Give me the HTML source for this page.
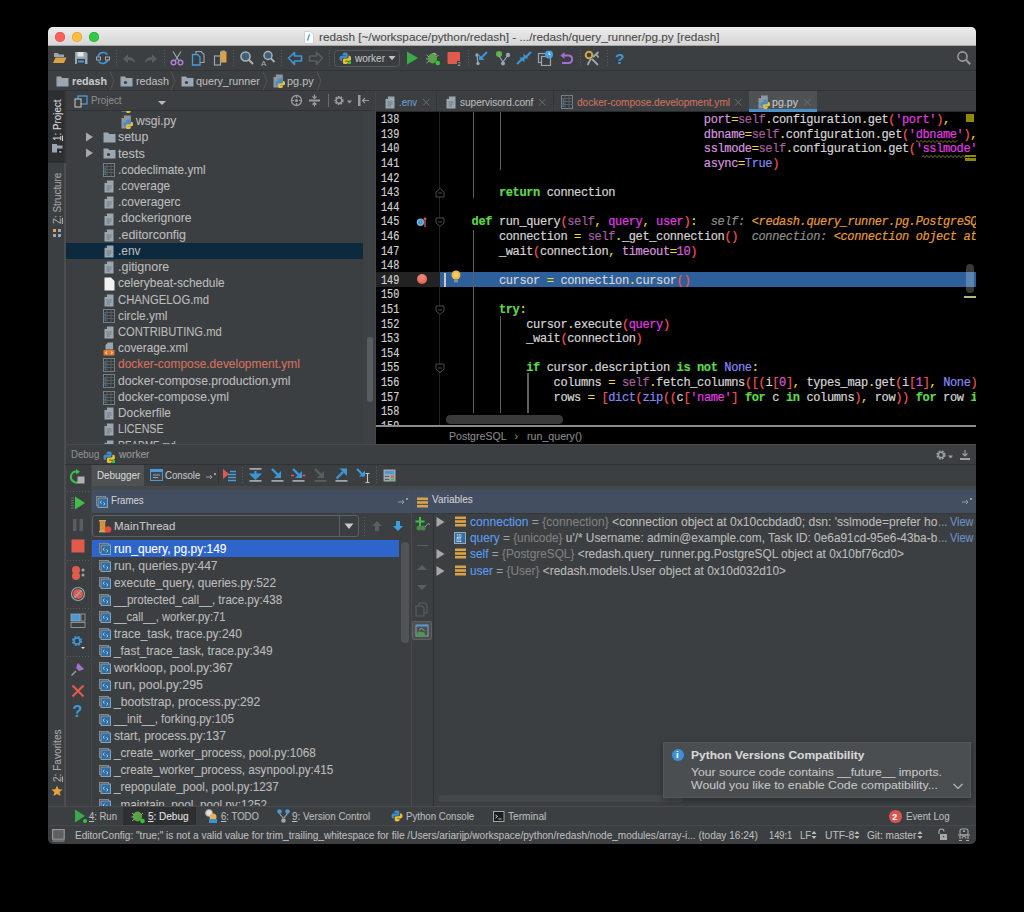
<!DOCTYPE html>
<html><head><meta charset="utf-8"><title>redash</title>
<style>
*{box-sizing:border-box}
html,body{margin:0;padding:0}
body{width:1024px;height:912px;background:#000;position:relative;overflow:hidden;font-family:"Liberation Sans",sans-serif}
.a{position:absolute;display:block}
.t{position:absolute;white-space:pre;line-height:0;transform-origin:0 0}
.t{-webkit-text-stroke:0.1px currentColor}
.t.m{-webkit-text-stroke:0.2px currentColor}
#win{position:absolute;left:48px;top:27px;width:928px;height:817px;border-radius:5px;overflow:hidden;background:#3c3f41}
#in{position:absolute;left:-48px;top:-27px;width:1024px;height:912px}
</style></head><body><div id="win"><div id="in">
<div class="a" style="left:48px;top:27px;width:928px;height:18.7px;background:linear-gradient(#ececec,#d5d5d5);"></div>
<div class="a" style="left:48px;top:45.2px;width:928px;height:0.8px;background:#a8a8a8;"></div>
<div class="a" style="left:54.7px;top:31.6px;width:10.4px;height:10.4px;border-radius:50%;background:#fc605b;box-shadow:inset 0 0 0 0.5px #de4a43"></div>
<div class="a" style="left:71.9px;top:31.6px;width:10.4px;height:10.4px;border-radius:50%;background:#fdbc40;box-shadow:inset 0 0 0 0.5px #dea034"></div>
<div class="a" style="left:89.0px;top:31.6px;width:10.4px;height:10.4px;border-radius:50%;background:#34c84a;box-shadow:inset 0 0 0 0.5px #27aa35"></div>
<svg class="a" style="left:303.5px;top:30.5px;" width="10" height="13" viewBox="0 0 10 13"><path d="M0.5 0.5h6l3 3v9h-9z" fill="#fdfdfd" stroke="#c8c8c8" stroke-width="0.8"/><path d="M5.8 3.5l-0.8 1 M5 4.5 L3.6 9.5" stroke="#3a9ee0" stroke-width="1.3" fill="none"/></svg>
<div class="t" style="left:319px;top:37.11px;font-size:11.8px;color:#4b4b4b;font-weight:normal;font-family:'Liberation Sans';font-style:normal;transform:scaleX(0.9971);">redash [~/workspace/python/redash] - .../redash/query_runner/pg.py [redash]</div>
<div class="a" style="left:48px;top:70px;width:928px;height:1px;background:#323435;"></div>
<svg class="a" style="left:51.7px;top:50.0px;" width="16" height="16" viewBox="0 0 16 16"><path d="M2 3h4l1 1.5h5v2.5H2z" fill="#9aa7b0"/><path d="M3.5 7.5h11l-2.5 5.5H1z" fill="#d9a343"/></svg>
<svg class="a" style="left:73.2px;top:50.0px;" width="16" height="16" viewBox="0 0 16 16"><path d="M2 2h11l1.5 1.5V14H2z" fill="#9aa7b0"/><rect x="4.5" y="2" width="6" height="4.5" fill="#e6e6e6"/><rect x="4" y="9" width="8" height="5" fill="#3c3f41"/><rect x="5" y="10.5" width="6" height="2" fill="#4a9ad8"/></svg>
<svg class="a" style="left:94.7px;top:50.0px;" width="16" height="16" viewBox="0 0 16 16"><path d="M3 6.5A5.5 5.5 0 0 1 12.5 4.5" stroke="#3d96d6" stroke-width="1.6" fill="none"/><path d="M13 9.5A5.5 5.5 0 0 1 3.5 11.5" stroke="#3d96d6" stroke-width="1.6" fill="none"/><rect x="1.5" y="7" width="4" height="3" fill="none" stroke="#9aa7b0"/><rect x="10.5" y="7" width="4" height="3" fill="none" stroke="#9aa7b0"/></svg>
<div class="a" style="left:115.9px;top:50px;width:1px;height:17px;background:repeating-linear-gradient(#5a5d5f 0 1px,transparent 1px 3px)"></div>
<svg class="a" style="left:121.0px;top:50.0px;" width="16" height="16" viewBox="0 0 16 16"><path d="M2 9l5-5v3c4 0 7 2 7 6-1.5-2-4-3-7-3v3z" fill="#5b5e60"/></svg>
<svg class="a" style="left:142.5px;top:50.0px;" width="16" height="16" viewBox="0 0 16 16"><path d="M14 9l-5-5v3c-4 0-7 2-7 6 1.5-2 4-3 7-3v3z" fill="#5b5e60"/></svg>
<div class="a" style="left:164.1px;top:50px;width:1px;height:17px;background:repeating-linear-gradient(#5a5d5f 0 1px,transparent 1px 3px)"></div>
<svg class="a" style="left:169.3px;top:50.0px;" width="16" height="16" viewBox="0 0 16 16"><path d="M4 1.5l6 9.5M12 1.5l-6 9.5" stroke="#9aa7b0" stroke-width="1.2"/><circle cx="4.5" cy="12.5" r="2.3" fill="none" stroke="#b27ed8" stroke-width="1.4"/><circle cx="11.5" cy="12.5" r="2.3" fill="none" stroke="#b27ed8" stroke-width="1.4"/></svg>
<svg class="a" style="left:190.4px;top:50.0px;" width="16" height="16" viewBox="0 0 16 16"><path d="M6 1.5h5l3 3v8H6z" fill="none" stroke="#9aa7b0" stroke-width="1.1"/><path d="M2.5 4.5h5l2.5 2.5v8H2.5z" fill="#3c3f41" stroke="#4a9ad8" stroke-width="1.3"/></svg>
<svg class="a" style="left:211.9px;top:50.0px;" width="16" height="16" viewBox="0 0 16 16"><rect x="8" y="1.5" width="6.5" height="11" fill="#d9a343"/><rect x="9.5" y="0.5" width="3.5" height="2" fill="#9aa7b0"/><rect x="2.5" y="6" width="6" height="9" fill="#3c3f41" stroke="#9aa7b0" stroke-width="1.2"/></svg>
<div class="a" style="left:232.7px;top:50px;width:1px;height:17px;background:repeating-linear-gradient(#5a5d5f 0 1px,transparent 1px 3px)"></div>
<svg class="a" style="left:239.2px;top:50.0px;" width="16" height="16" viewBox="0 0 16 16"><circle cx="6.5" cy="6.5" r="4.5" fill="#3d7bb0" fill-opacity="0.55" stroke="#aab0b5" stroke-width="1.6"/><path d="M9.8 9.8L14 14" stroke="#aab0b5" stroke-width="2"/></svg>
<svg class="a" style="left:260.0px;top:50.0px;" width="16" height="16" viewBox="0 0 16 16"><circle cx="8" cy="5.5" r="4" fill="#3d7bb0" fill-opacity="0.55" stroke="#aab0b5" stroke-width="1.5"/><path d="M11 8.5L14.5 12" stroke="#aab0b5" stroke-width="1.8"/><text x="1" y="15.5" font-size="8" font-family="Liberation Sans" fill="#aab0b5">A</text></svg>
<div class="a" style="left:281.3px;top:50px;width:1px;height:17px;background:repeating-linear-gradient(#5a5d5f 0 1px,transparent 1px 3px)"></div>
<svg class="a" style="left:286.5px;top:50.0px;" width="16" height="16" viewBox="0 0 16 16"><path d="M1.5 8l6-5.5v3.5h7v5h-7v3.5z" fill="none" stroke="#3d96d6" stroke-width="1.6" stroke-linejoin="round"/></svg>
<svg class="a" style="left:308.0px;top:50.0px;" width="16" height="16" viewBox="0 0 16 16"><path d="M14.5 8l-6-5.5v3.5h-7v5h7v3.5z" fill="none" stroke="#5b5e60" stroke-width="1.6" stroke-linejoin="round"/></svg>
<div class="a" style="left:329.1px;top:50px;width:1px;height:17px;background:repeating-linear-gradient(#5a5d5f 0 1px,transparent 1px 3px)"></div>
<div class="a" style="left:333.8px;top:50.3px;width:66px;height:16.4px;border:1px solid #55585a;border-radius:3.5px;background:#3a3d3f"></div>
<svg class="a" style="left:338.6px;top:51.9px;" width="12.6" height="12.6" viewBox="0 0 12.6 12.6"><g transform="scale(1.05)"><path d="M6 0.5c-2.6 0-2.5 1.2-2.5 1.2V3h2.6v0.6H2.2S0.5 3.4 0.5 6c0 2.6 1.5 2.5 1.5 2.5h0.9V7.3s0-1.5 1.5-1.5h2.5s1.4 0 1.4-1.4V1.9S8.5 0.5 6 0.5z" fill="#3d8ccf"/><path d="M6 11.5c2.6 0 2.5-1.2 2.5-1.2V9H5.9V8.4h3.9s1.7 0.2 1.7-2.4c0-2.6-1.5-2.5-1.5-2.5H9.1v1.2s0 1.5-1.5 1.5H5.1s-1.4 0-1.4 1.4v2.5S3.5 11.5 6 11.5z" fill="#e6c132"/><circle cx="10.3" cy="10.3" r="1.8" fill="#2ec834"/></g></svg>
<div class="t" style="left:354.6px;top:57.61px;font-size:11.5px;color:#c4c4c4;font-weight:normal;font-family:'Liberation Sans';font-style:normal;transform:scaleX(0.8694);">worker</div>
<svg class="a" style="left:384.1px;top:50.3px;" width="16" height="16" viewBox="0 0 16 16"><path d="M4.5 6h7l-3.5 4.3z" fill="#c4c4c4"/></svg>
<svg class="a" style="left:403.7px;top:50.0px;" width="16" height="16" viewBox="0 0 16 16"><path d="M3 1.5l11 6.5-11 6.5z" fill="#3daa4a"/></svg>
<svg class="a" style="left:424.8px;top:50.0px;" width="16" height="16" viewBox="0 0 16 16"><ellipse cx="7.5" cy="8.5" rx="4.5" ry="5" fill="#5aa342"/><path d="M7 3.5a3 3 0 0 1 5 2" fill="#9aa7b0"/><path d="M1.5 5l2.5 2M1 9h2.5M1.5 13l2.5-2M13.5 5l-2 2" stroke="#9aa7b0" stroke-width="1"/><circle cx="12.8" cy="13" r="2.3" fill="#2ec834"/></svg>
<svg class="a" style="left:446.4px;top:50.0px;" width="16" height="16" viewBox="0 0 16 16"><rect x="1.5" y="2" width="12.5" height="12" rx="1" fill="#e05a4e"/><rect x="11" y="11" width="5" height="5" fill="#3c3f41"/><text x="11.8" y="15.8" font-size="5" fill="#bbb" font-family="Liberation Sans">2</text></svg>
<div class="a" style="left:467.9px;top:50px;width:1px;height:17px;background:repeating-linear-gradient(#5a5d5f 0 1px,transparent 1px 3px)"></div>
<svg class="a" style="left:472.9px;top:50.0px;" width="16" height="16" viewBox="0 0 16 16"><path d="M14 2L7.5 8.5" stroke="#3d96d6" stroke-width="2"/><path d="M6 4.5v5.5h5.5z" fill="#3d96d6"/><circle cx="4" cy="5" r="1.7" fill="#9aa7b0"/><circle cx="5" cy="13.5" r="1.7" fill="#9aa7b0"/><path d="M4 5l1 8.5" stroke="#9aa7b0" stroke-width="1.2"/></svg>
<svg class="a" style="left:494.6px;top:50.0px;" width="16" height="16" viewBox="0 0 16 16"><circle cx="4" cy="4" r="3" fill="#62b543"/><circle cx="13" cy="5" r="2.2" fill="#9aa7b0"/><circle cx="8" cy="13.5" r="2" fill="#9aa7b0"/><path d="M4 6l4 6M12 6.5L8 12" stroke="#9aa7b0" stroke-width="1.2"/></svg>
<svg class="a" style="left:516.2px;top:50.0px;" width="16" height="16" viewBox="0 0 16 16"><path d="M15 2L9 8M1 14l6-6" stroke="#3d96d6" stroke-width="2"/><path d="M7.5 3.5v5h5z M8.5 12.5v-5h-5z" fill="#3d96d6"/></svg>
<svg class="a" style="left:537.3px;top:50.0px;" width="16" height="16" viewBox="0 0 16 16"><rect x="1.5" y="3.5" width="9" height="9" fill="none" stroke="#9aa7b0" stroke-width="1.2"/><rect x="4.5" y="6.5" width="9" height="9" fill="#3c3f41" stroke="#9aa7b0" stroke-width="1.2"/><circle cx="12" cy="4.5" r="4" fill="#4aa0e0"/><path d="M12 2.5v2h1.5" stroke="#fff" stroke-width="0.9" fill="none"/></svg>
<svg class="a" style="left:558.9px;top:50.0px;" width="16" height="16" viewBox="0 0 16 16"><path d="M4 5.5h6a3.8 3.8 0 0 1 0 7.5H3" fill="none" stroke="#a46ed6" stroke-width="1.9"/><path d="M1.5 5.5l4-3.5v7z" fill="#a46ed6"/></svg>
<div class="a" style="left:580.0px;top:50px;width:1px;height:17px;background:repeating-linear-gradient(#5a5d5f 0 1px,transparent 1px 3px)"></div>
<svg class="a" style="left:584.2px;top:50.0px;" width="16" height="16" viewBox="0 0 16 16"><circle cx="5" cy="5" r="3.3" fill="none" stroke="#d9a343" stroke-width="2"/><path d="M7 8.5L3.5 15 M9 7l5.5-5 M12 4l2.5 3.5 M8 9l6 6" stroke="#9aa7b0" stroke-width="1.8"/></svg>
<div class="a" style="left:606.9px;top:50px;width:1px;height:17px;background:repeating-linear-gradient(#5a5d5f 0 1px,transparent 1px 3px)"></div>
<div class="t" style="left:615.2px;top:58.80px;font-size:15px;color:#3d96d6;font-weight:bold;font-family:'Liberation Sans';font-style:normal;">?</div>
<svg class="a" style="left:956.4px;top:49.9px;" width="16" height="16" viewBox="0 0 16 16"><circle cx="6.5" cy="6.5" r="4.6" fill="none" stroke="#9a9a9a" stroke-width="1.6"/><path d="M9.8 9.8L14.2 14.2" stroke="#9a9a9a" stroke-width="2.1"/></svg>
<div class="a" style="left:48px;top:90px;width:928px;height:1px;background:#333132;"></div>
<svg class="a" style="left:56px;top:75px;" width="13" height="12" viewBox="0 0 13 12"><path d="M0.5 1.5h4.5l1.2 1.5h6.3v8.5H0.5z" fill="#9aa7b0"/></svg>
<div class="t" style="left:72px;top:81.31px;font-size:11.5px;color:#c8c8c8;font-weight:bold;font-family:'Liberation Sans';font-style:normal;transform:scaleX(0.9281);">redash</div>
<svg class="a" style="left:109px;top:71px;" width="7" height="20" viewBox="0 0 7 20"><path d="M1 0.5L5 10 1 19.5" fill="none" stroke="#55585a" stroke-width="0.9"/></svg>
<svg class="a" style="left:119.5px;top:75px;" width="13" height="12" viewBox="0 0 13 12"><path d="M0.5 1.5h4.5l1.2 1.5h6.3v8.5H0.5z" fill="#9aa7b0"/><circle cx="5.5" cy="7.5" r="1.6" fill="#3c3f41"/></svg>
<div class="t" style="left:135.5px;top:81.31px;font-size:11.5px;color:#bbbbbb;font-weight:normal;font-family:'Liberation Sans';font-style:normal;transform:scaleX(0.9385);">redash</div>
<svg class="a" style="left:170.2px;top:71px;" width="7" height="20" viewBox="0 0 7 20"><path d="M1 0.5L5 10 1 19.5" fill="none" stroke="#55585a" stroke-width="0.9"/></svg>
<svg class="a" style="left:181px;top:75px;" width="13" height="12" viewBox="0 0 13 12"><path d="M0.5 1.5h4.5l1.2 1.5h6.3v8.5H0.5z" fill="#9aa7b0"/><circle cx="5.5" cy="7.5" r="1.6" fill="#3c3f41"/></svg>
<div class="t" style="left:196.2px;top:81.31px;font-size:11.5px;color:#bbbbbb;font-weight:normal;font-family:'Liberation Sans';font-style:normal;transform:scaleX(0.9327);">query_runner</div>
<svg class="a" style="left:262.4px;top:71px;" width="7" height="20" viewBox="0 0 7 20"><path d="M1 0.5L5 10 1 19.5" fill="none" stroke="#55585a" stroke-width="0.9"/></svg>
<svg class="a" style="left:272.5px;top:73.5px;" width="11" height="14" viewBox="0 0 11 14"><path d="M3 0.5h6.8v13H0.5V3z" fill="#8f979c"/><path d="M0.5 3L3 0.5V3z" fill="#3c3f41"/></svg>
<svg class="a" style="left:275.1px;top:77.7px;" width="10.5" height="10.5" viewBox="0 0 10.5 10.5"><g transform="scale(0.875)"><path d="M6 0.5c-2.6 0-2.5 1.2-2.5 1.2V3h2.6v0.6H2.2S0.5 3.4 0.5 6c0 2.6 1.5 2.5 1.5 2.5h0.9V7.3s0-1.5 1.5-1.5h2.5s1.4 0 1.4-1.4V1.9S8.5 0.5 6 0.5z" fill="#3d8ccf"/><path d="M6 11.5c2.6 0 2.5-1.2 2.5-1.2V9H5.9V8.4h3.9s1.7 0.2 1.7-2.4c0-2.6-1.5-2.5-1.5-2.5H9.1v1.2s0 1.5-1.5 1.5H5.1s-1.4 0-1.4 1.4v2.5S3.5 11.5 6 11.5z" fill="#e6c132"/></g></svg>
<div class="t" style="left:287.3px;top:81.31px;font-size:11.5px;color:#bbbbbb;font-weight:normal;font-family:'Liberation Sans';font-style:normal;transform:scaleX(0.9491);">pg.py</div>
<svg class="a" style="left:315.7px;top:71px;" width="7" height="20" viewBox="0 0 7 20"><path d="M1 0.5L5 10 1 19.5" fill="none" stroke="#55585a" stroke-width="0.9"/></svg>
<div class="a" style="left:48px;top:91px;width:16.5px;height:72px;background:#2d2f31;"></div>
<div class="a" style="left:64.3px;top:163px;width:1.4px;height:643px;background:#4c4d4e;"></div>
<div class="a" style="left:64.3px;top:91px;width:1.4px;height:72px;background:#333436;"></div>
<div class="a" style="left:48px;top:140.5px;width:0;height:0;transform:rotate(-90deg);transform-origin:0 0">
<div class="t" style="left:0px;top:9.46px;font-size:10.8px;color:#d8d8d8;font-weight:normal;font-family:'Liberation Sans';font-style:normal;transform:scaleX(0.9099);"><u>1</u>: Project</div>
</div>
<svg class="a" style="left:50.5px;top:143px;" width="13" height="11" viewBox="0 0 13 11"><rect x="1" y="1" width="5" height="8.5" fill="#9aa7b0"/><rect x="6" y="2.5" width="5.5" height="3" fill="#9aa7b0"/><rect x="7" y="7" width="4.5" height="3.5" fill="#1e1f20"/><rect x="8" y="8.3" width="2.5" height="1.2" fill="#d0d0d0"/></svg>
<div class="a" style="left:48px;top:223.8px;width:0;height:0;transform:rotate(-90deg);transform-origin:0 0">
<div class="t" style="left:0px;top:9.46px;font-size:10.8px;color:#a8a8a8;font-weight:normal;font-family:'Liberation Sans';font-style:normal;transform:scaleX(0.9096);"><u>Z</u>: Structure</div>
</div>
<svg class="a" style="left:52px;top:227.5px;" width="11" height="10" viewBox="0 0 11 10"><rect x="1" y="1" width="3" height="3" fill="#e6a23c"/><rect x="6" y="1" width="3" height="3" fill="#9aa7b0"/><rect x="1" y="6" width="3" height="3" fill="#9aa7b0"/><rect x="6" y="6" width="3" height="3" fill="#9aa7b0"/></svg>
<div class="a" style="left:48px;top:782px;width:0;height:0;transform:rotate(-90deg);transform-origin:0 0">
<div class="t" style="left:0px;top:9.46px;font-size:10.8px;color:#a8a8a8;font-weight:normal;font-family:'Liberation Sans';font-style:normal;transform:scaleX(0.9308);"><u>2</u>: Favorites</div>
</div>
<svg class="a" style="left:51px;top:785px;" width="12" height="12" viewBox="0 0 12 12"><path d="M6 0.5l1.6 3.7 4 0.3-3 2.6 1 3.9L6 8.9 2.4 11l1-3.9-3-2.6 4-0.3z" fill="#e6a23c"/></svg>
<div class="a" style="left:65px;top:109.5px;width:310px;height:1px;background:#303234;"></div>
<svg class="a" style="left:73.5px;top:95px;" width="14" height="13" viewBox="0 0 14 13"><rect x="4" y="1" width="9" height="8" fill="none" stroke="#4a9ad8" stroke-width="1.3"/><rect x="1" y="4" width="6" height="8" fill="#3c3f41" stroke="#c0c0c0" stroke-width="1.1"/></svg>
<div class="t" style="left:91px;top:100.96px;font-size:10.2px;color:#8c8c8c;font-weight:normal;font-family:'Liberation Sans';font-style:normal;transform:scaleX(0.9619);">Project</div>
<svg class="a" style="left:154.7px;top:94.5px;" width="14" height="14" viewBox="0 0 14 14"><path d="M3 6h8l-4 4z" fill="#bbbbbb"/></svg>
<svg class="a" style="left:289.6px;top:94.2px;" width="13" height="13" viewBox="0 0 13 13"><circle cx="6.5" cy="6.5" r="5" fill="none" stroke="#9a9a9a" stroke-width="1.3"/><circle cx="6.5" cy="6.5" r="1.6" fill="#9a9a9a"/><path d="M6.5 1.5v2.5M6.5 9v2.5M1.5 6.5H4M9 6.5h2.5" stroke="#9a9a9a" stroke-width="1.2"/></svg>
<svg class="a" style="left:308.2px;top:94.2px;" width="13" height="13" viewBox="0 0 13 13"><path d="M6.5 0.5v4M4.5 2.5l2 2 2-2M6.5 12.5v-4M4.5 10.5l2-2 2 2" stroke="#9a9a9a" stroke-width="1.2" fill="none"/><rect x="1" y="5.5" width="11" height="2" fill="#9a9a9a"/></svg>
<div class="a" style="left:327.5px;top:94px;width:1.2px;height:13px;background:#6a6a6a;"></div>
<svg class="a" style="left:333.1px;top:94.2px;" width="13" height="13" viewBox="0 0 13 13"><circle cx="6" cy="6.5" r="3.5" fill="none" stroke="#9a9a9a" stroke-width="2.2" stroke-dasharray="1.6 0.9"/><circle cx="6" cy="6.5" r="2.8" fill="none" stroke="#9a9a9a" stroke-width="1.4"/></svg>
<svg class="a" style="left:346.0px;top:98.0px;" width="7" height="7" viewBox="0 0 7 7"><path d="M1 2.5h5l-2.5 3z" fill="#9a9a9a"/></svg>
<svg class="a" style="left:357.0px;top:94.2px;" width="13" height="13" viewBox="0 0 13 13"><rect x="1" y="1" width="2.5" height="11" fill="#9a9a9a"/><path d="M12 6.5H6M8 4l-2.5 2.5L8 9" stroke="#9a9a9a" stroke-width="1.1" fill="none"/></svg>
<div class="a" style="left:65px;top:110.5px;width:310px;height:333.3px;overflow:hidden"><div class="a" style="left:-65px;top:-110.5px;width:1024px;height:912px">
<div class="a" style="left:66px;top:243px;width:297px;height:16px;background:#0d293e;"></div>
<div class="a" style="left:362.5px;top:110.5px;width:12.5px;height:334px;background:#3e4143;"></div>
<div class="a" style="left:366.5px;top:336.5px;width:6px;height:65px;border-radius:3px;background:#5a5d5f"></div>
<svg class="a" style="left:120.7px;top:98.48px;" width="11" height="14" viewBox="0 0 11 14"><path d="M3 0.5h6.8v13H0.5V3z" fill="#8f979c"/><path d="M0.5 3L3 0.5V3z" fill="#3c3f41"/></svg>
<svg class="a" style="left:123.3px;top:102.68px;" width="10.5" height="10.5" viewBox="0 0 10.5 10.5"><g transform="scale(0.875)"><path d="M6 0.5c-2.6 0-2.5 1.2-2.5 1.2V3h2.6v0.6H2.2S0.5 3.4 0.5 6c0 2.6 1.5 2.5 1.5 2.5h0.9V7.3s0-1.5 1.5-1.5h2.5s1.4 0 1.4-1.4V1.9S8.5 0.5 6 0.5z" fill="#3d8ccf"/><path d="M6 11.5c2.6 0 2.5-1.2 2.5-1.2V9H5.9V8.4h3.9s1.7 0.2 1.7-2.4c0-2.6-1.5-2.5-1.5-2.5H9.1v1.2s0 1.5-1.5 1.5H5.1s-1.4 0-1.4 1.4v2.5S3.5 11.5 6 11.5z" fill="#e6c132"/></g></svg>
<svg class="a" style="left:120.7px;top:114.7px;" width="11" height="14" viewBox="0 0 11 14"><path d="M3 0.5h6.8v13H0.5V3z" fill="#8f979c"/><path d="M0.5 3L3 0.5V3z" fill="#3c3f41"/></svg>
<svg class="a" style="left:123.3px;top:118.9px;" width="10.5" height="10.5" viewBox="0 0 10.5 10.5"><g transform="scale(0.875)"><path d="M6 0.5c-2.6 0-2.5 1.2-2.5 1.2V3h2.6v0.6H2.2S0.5 3.4 0.5 6c0 2.6 1.5 2.5 1.5 2.5h0.9V7.3s0-1.5 1.5-1.5h2.5s1.4 0 1.4-1.4V1.9S8.5 0.5 6 0.5z" fill="#3d8ccf"/><path d="M6 11.5c2.6 0 2.5-1.2 2.5-1.2V9H5.9V8.4h3.9s1.7 0.2 1.7-2.4c0-2.6-1.5-2.5-1.5-2.5H9.1v1.2s0 1.5-1.5 1.5H5.1s-1.4 0-1.4 1.4v2.5S3.5 11.5 6 11.5z" fill="#e6c132"/></g></svg>
<div class="t" style="left:135.5px;top:121.17px;font-size:11.9px;color:#bbbbbb;font-weight:normal;font-family:'Liberation Sans';font-style:normal;transform:scaleX(1.0164);">wsgi.py</div>
<svg class="a" style="left:83.8px;top:131.0px;" width="11" height="12" viewBox="0 0 11 12"><path d="M2 1.5l7 4.5-7 4.5z" fill="#a8a8a8"/></svg>
<svg class="a" style="left:102.5px;top:130.51999999999998px;" width="13" height="12" viewBox="0 0 13 12"><path d="M0.5 1.5h4.5l1.2 1.5h6.3v8.5H0.5z" fill="#9aa7b0"/></svg>
<div class="t" style="left:118.3px;top:137.39px;font-size:11.9px;color:#bbbbbb;font-weight:normal;font-family:'Liberation Sans';font-style:normal;transform:scaleX(1.0451);">setup</div>
<svg class="a" style="left:83.8px;top:147.2px;" width="11" height="12" viewBox="0 0 11 12"><path d="M2 1.5l7 4.5-7 4.5z" fill="#a8a8a8"/></svg>
<svg class="a" style="left:102.5px;top:146.74px;" width="13" height="12" viewBox="0 0 13 12"><path d="M0.5 1.5h4.5l1.2 1.5h6.3v8.5H0.5z" fill="#9aa7b0"/><circle cx="5.5" cy="7.5" r="1.6" fill="#3c3f41"/></svg>
<div class="t" style="left:118.3px;top:153.61px;font-size:11.9px;color:#bbbbbb;font-weight:normal;font-family:'Liberation Sans';font-style:normal;transform:scaleX(1.0673);">tests</div>
<svg class="a" style="left:103px;top:163.45999999999998px;" width="12" height="14" viewBox="0 0 12 14"><rect x="0.5" y="0.5" width="11" height="13" fill="#36393b" stroke="#7a8185" stroke-width="1"/><path d="M4 0.5v13M8 0.5v13M0.5 3.5h11M0.5 6.5h11M0.5 9.5h11" stroke="#5c6266" stroke-width="0.9"/><path d="M2.2 4.5v1.2M2.2 7.5v1.2M2.2 10.5v1.2" stroke="#3d9ee0" stroke-width="1.3"/></svg>
<div class="t" style="left:118.3px;top:169.83px;font-size:11.9px;color:#bbbbbb;font-weight:normal;font-family:'Liberation Sans';font-style:normal;transform:scaleX(0.9904);">.codeclimate.yml</div>
<svg class="a" style="left:103.5px;top:180.18px;" width="10" height="13" viewBox="0 0 10 13"><path d="M3 0.5h6.5v12H0.5V3z" fill="#9aa7b0"/><path d="M0.5 3L3 0.5V3z" fill="#3c3f41"/><path d="M2.5 6h5M2.5 8h5M2.5 10h3.5" stroke="#6d747a" stroke-width="0.9"/></svg>
<div class="t" style="left:118.3px;top:186.05px;font-size:11.9px;color:#bbbbbb;font-weight:normal;font-family:'Liberation Sans';font-style:normal;transform:scaleX(0.9977);">.coverage</div>
<svg class="a" style="left:103.5px;top:196.39999999999998px;" width="10" height="13" viewBox="0 0 10 13"><path d="M3 0.5h6.5v12H0.5V3z" fill="#9aa7b0"/><path d="M0.5 3L3 0.5V3z" fill="#3c3f41"/><path d="M2.5 6h5M2.5 8h5M2.5 10h3.5" stroke="#6d747a" stroke-width="0.9"/></svg>
<div class="t" style="left:118.3px;top:202.27px;font-size:11.9px;color:#bbbbbb;font-weight:normal;font-family:'Liberation Sans';font-style:normal;transform:scaleX(1.0077);">.coveragerc</div>
<svg class="a" style="left:103.5px;top:212.62px;" width="10" height="13" viewBox="0 0 10 13"><path d="M3 0.5h6.5v12H0.5V3z" fill="#9aa7b0"/><path d="M0.5 3L3 0.5V3z" fill="#3c3f41"/><path d="M2.5 6h5M2.5 8h5M2.5 10h3.5" stroke="#6d747a" stroke-width="0.9"/></svg>
<div class="t" style="left:118.3px;top:218.49px;font-size:11.9px;color:#bbbbbb;font-weight:normal;font-family:'Liberation Sans';font-style:normal;transform:scaleX(1.0188);">.dockerignore</div>
<svg class="a" style="left:103.5px;top:228.83999999999997px;" width="10" height="13" viewBox="0 0 10 13"><path d="M3 0.5h6.5v12H0.5V3z" fill="#9aa7b0"/><path d="M0.5 3L3 0.5V3z" fill="#3c3f41"/><path d="M2.5 6h5M2.5 8h5M2.5 10h3.5" stroke="#6d747a" stroke-width="0.9"/></svg>
<div class="t" style="left:118.3px;top:234.71px;font-size:11.9px;color:#bbbbbb;font-weight:normal;font-family:'Liberation Sans';font-style:normal;transform:scaleX(1.0498);">.editorconfig</div>
<svg class="a" style="left:103.5px;top:245.06px;" width="10" height="13" viewBox="0 0 10 13"><path d="M3 0.5h6.5v12H0.5V3z" fill="#9aa7b0"/><path d="M0.5 3L3 0.5V3z" fill="#3c3f41"/><path d="M2.5 6h5M2.5 8h5M2.5 10h3.5" stroke="#6d747a" stroke-width="0.9"/></svg>
<div class="t" style="left:118.3px;top:250.93px;font-size:11.9px;color:#bbbbbb;font-weight:normal;font-family:'Liberation Sans';font-style:normal;transform:scaleX(1.0011);">.env</div>
<svg class="a" style="left:103.5px;top:261.28px;" width="10" height="13" viewBox="0 0 10 13"><path d="M3 0.5h6.5v12H0.5V3z" fill="#9aa7b0"/><path d="M0.5 3L3 0.5V3z" fill="#3c3f41"/><path d="M2.5 6h5M2.5 8h5M2.5 10h3.5" stroke="#6d747a" stroke-width="0.9"/></svg>
<div class="t" style="left:118.3px;top:267.15px;font-size:11.9px;color:#bbbbbb;font-weight:normal;font-family:'Liberation Sans';font-style:normal;transform:scaleX(1.0467);">.gitignore</div>
<svg class="a" style="left:103.5px;top:277.0px;" width="11" height="14" viewBox="0 0 11 14"><path d="M0.5 0.5h6.5l3.5 3.5v9.5H0.5z" fill="#f2f2f2"/></svg>
<div class="t" style="left:118.3px;top:283.37px;font-size:11.9px;color:#bbbbbb;font-weight:normal;font-family:'Liberation Sans';font-style:normal;transform:scaleX(1.0027);">celerybeat-schedule</div>
<svg class="a" style="left:103.5px;top:293.71999999999997px;" width="10" height="13" viewBox="0 0 10 13"><path d="M3 0.5h6.5v12H0.5V3z" fill="#9aa7b0"/><path d="M0.5 3L3 0.5V3z" fill="#3c3f41"/><path d="M2.5 6h5M2.5 8h5M2.5 10h3.5" stroke="#6d747a" stroke-width="0.9"/></svg>
<div class="t" style="left:118.3px;top:299.59px;font-size:11.9px;color:#bbbbbb;font-weight:normal;font-family:'Liberation Sans';font-style:normal;transform:scaleX(0.9499);">CHANGELOG.md</div>
<svg class="a" style="left:103px;top:309.44px;" width="12" height="14" viewBox="0 0 12 14"><rect x="0.5" y="0.5" width="11" height="13" fill="#36393b" stroke="#7a8185" stroke-width="1"/><path d="M4 0.5v13M8 0.5v13M0.5 3.5h11M0.5 6.5h11M0.5 9.5h11" stroke="#5c6266" stroke-width="0.9"/><path d="M2.2 4.5v1.2M2.2 7.5v1.2M2.2 10.5v1.2" stroke="#3d9ee0" stroke-width="1.3"/></svg>
<div class="t" style="left:118.3px;top:315.81px;font-size:11.9px;color:#bbbbbb;font-weight:normal;font-family:'Liberation Sans';font-style:normal;transform:scaleX(0.9971);">circle.yml</div>
<svg class="a" style="left:103.5px;top:326.15999999999997px;" width="10" height="13" viewBox="0 0 10 13"><path d="M3 0.5h6.5v12H0.5V3z" fill="#9aa7b0"/><path d="M0.5 3L3 0.5V3z" fill="#3c3f41"/><path d="M2.5 6h5M2.5 8h5M2.5 10h3.5" stroke="#6d747a" stroke-width="0.9"/></svg>
<div class="t" style="left:118.3px;top:332.03px;font-size:11.9px;color:#bbbbbb;font-weight:normal;font-family:'Liberation Sans';font-style:normal;transform:scaleX(0.9400);">CONTRIBUTING.md</div>
<svg class="a" style="left:103px;top:341.88px;" width="12" height="14" viewBox="0 0 12 14"><path d="M5 0.5h5v7H2.5V3z" fill="#9aa7b0"/><rect x="0.5" y="8" width="11" height="5.5" fill="#e07a2e"/><path d="M4 9.5l-1.5 1.3 1.5 1.3M8 9.5l1.5 1.3L8 12.1" stroke="#fff" stroke-width="0.8" fill="none"/></svg>
<div class="t" style="left:118.3px;top:348.25px;font-size:11.9px;color:#bbbbbb;font-weight:normal;font-family:'Liberation Sans';font-style:normal;transform:scaleX(0.9885);">coverage.xml</div>
<svg class="a" style="left:103px;top:358.09999999999997px;" width="12" height="14" viewBox="0 0 12 14"><rect x="0.5" y="0.5" width="11" height="13" fill="#36393b" stroke="#7a8185" stroke-width="1"/><path d="M4 0.5v13M8 0.5v13M0.5 3.5h11M0.5 6.5h11M0.5 9.5h11" stroke="#5c6266" stroke-width="0.9"/><path d="M2.2 4.5v1.2M2.2 7.5v1.2M2.2 10.5v1.2" stroke="#3d9ee0" stroke-width="1.3"/></svg>
<div class="t" style="left:118.3px;top:364.47px;font-size:11.9px;color:#d3705f;font-weight:normal;font-family:'Liberation Sans';font-style:normal;transform:scaleX(1.0045);">docker-compose.development.yml</div>
<svg class="a" style="left:103px;top:374.32px;" width="12" height="14" viewBox="0 0 12 14"><rect x="0.5" y="0.5" width="11" height="13" fill="#36393b" stroke="#7a8185" stroke-width="1"/><path d="M4 0.5v13M8 0.5v13M0.5 3.5h11M0.5 6.5h11M0.5 9.5h11" stroke="#5c6266" stroke-width="0.9"/><path d="M2.2 4.5v1.2M2.2 7.5v1.2M2.2 10.5v1.2" stroke="#3d9ee0" stroke-width="1.3"/></svg>
<div class="t" style="left:118.3px;top:380.69px;font-size:11.9px;color:#bbbbbb;font-weight:normal;font-family:'Liberation Sans';font-style:normal;transform:scaleX(1.0236);">docker-compose.production.yml</div>
<svg class="a" style="left:103px;top:390.54px;" width="12" height="14" viewBox="0 0 12 14"><rect x="0.5" y="0.5" width="11" height="13" fill="#36393b" stroke="#7a8185" stroke-width="1"/><path d="M4 0.5v13M8 0.5v13M0.5 3.5h11M0.5 6.5h11M0.5 9.5h11" stroke="#5c6266" stroke-width="0.9"/><path d="M2.2 4.5v1.2M2.2 7.5v1.2M2.2 10.5v1.2" stroke="#3d9ee0" stroke-width="1.3"/></svg>
<div class="t" style="left:118.3px;top:396.91px;font-size:11.9px;color:#bbbbbb;font-weight:normal;font-family:'Liberation Sans';font-style:normal;transform:scaleX(1.0119);">docker-compose.yml</div>
<svg class="a" style="left:103.5px;top:407.26px;" width="10" height="13" viewBox="0 0 10 13"><path d="M3 0.5h6.5v12H0.5V3z" fill="#9aa7b0"/><path d="M0.5 3L3 0.5V3z" fill="#3c3f41"/><path d="M2.5 6h5M2.5 8h5M2.5 10h3.5" stroke="#6d747a" stroke-width="0.9"/></svg>
<div class="t" style="left:118.3px;top:413.13px;font-size:11.9px;color:#bbbbbb;font-weight:normal;font-family:'Liberation Sans';font-style:normal;transform:scaleX(1.0007);">Dockerfile</div>
<svg class="a" style="left:103.5px;top:423.47999999999996px;" width="10" height="13" viewBox="0 0 10 13"><path d="M3 0.5h6.5v12H0.5V3z" fill="#9aa7b0"/><path d="M0.5 3L3 0.5V3z" fill="#3c3f41"/><path d="M2.5 6h5M2.5 8h5M2.5 10h3.5" stroke="#6d747a" stroke-width="0.9"/></svg>
<div class="t" style="left:118.3px;top:429.35px;font-size:11.9px;color:#bbbbbb;font-weight:normal;font-family:'Liberation Sans';font-style:normal;transform:scaleX(0.8942);">LICENSE</div>
<svg class="a" style="left:103.5px;top:439.7px;" width="10" height="13" viewBox="0 0 10 13"><path d="M3 0.5h6.5v12H0.5V3z" fill="#9aa7b0"/><path d="M0.5 3L3 0.5V3z" fill="#3c3f41"/><path d="M2.5 6h5M2.5 8h5M2.5 10h3.5" stroke="#6d747a" stroke-width="0.9"/></svg>
<div class="t" style="left:118.3px;top:445.57px;font-size:11.9px;color:#bbbbbb;font-weight:normal;font-family:'Liberation Sans';font-style:normal;transform:scaleX(0.8162);">README.md</div>
</div></div>
<div class="a" style="left:374.6px;top:91px;width:1.4px;height:353px;background:#444648;"></div>
<div class="a" style="left:376px;top:91px;width:600px;height:21px;background:#3c3f41;"></div>
<div class="a" style="left:376px;top:110.5px;width:600px;height:1.5px;background:#2b2b2b;"></div>
<svg class="a" style="left:384.5px;top:95.5px;" width="10" height="13" viewBox="0 0 10 13"><path d="M3 0.5h6.5v12H0.5V3z" fill="#9aa7b0"/><path d="M0.5 3L3 0.5V3z" fill="#3c3f41"/><path d="M2.5 6h5M2.5 8h5M2.5 10h3.5" stroke="#6d747a" stroke-width="0.9"/></svg>
<div class="t" style="left:399px;top:101.56px;font-size:10.5px;color:#6e9ecf;font-weight:normal;font-family:'Liberation Sans';font-style:normal;transform:scaleX(0.9070);">.env</div>
<svg class="a" style="left:421.1px;top:97.0px;" width="10.5" height="10.5" viewBox="0 0 10.5 10.5"><path d="M2 2l6.5 6.5M8.5 2L2 8.5" stroke="#6a6d70" stroke-width="1"/></svg>
<div class="a" style="left:435.5px;top:91px;width:1px;height:20px;background:#333537;"></div>
<svg class="a" style="left:445.5px;top:95.5px;" width="10" height="13" viewBox="0 0 10 13"><path d="M3 0.5h6.5v12H0.5V3z" fill="#9aa7b0"/><path d="M0.5 3L3 0.5V3z" fill="#3c3f41"/><path d="M2.5 6h5M2.5 8h5M2.5 10h3.5" stroke="#6d747a" stroke-width="0.9"/></svg>
<div class="t" style="left:459.6px;top:101.56px;font-size:10.5px;color:#bbbbbb;font-weight:normal;font-family:'Liberation Sans';font-style:normal;transform:scaleX(0.9528);">supervisord.conf</div>
<svg class="a" style="left:537.0px;top:97.0px;" width="10.5" height="10.5" viewBox="0 0 10.5 10.5"><path d="M2 2l6.5 6.5M8.5 2L2 8.5" stroke="#6a6d70" stroke-width="1"/></svg>
<div class="a" style="left:552.5px;top:91px;width:1px;height:20px;background:#333537;"></div>
<svg class="a" style="left:561px;top:95px;" width="12" height="14" viewBox="0 0 12 14"><rect x="0.5" y="0.5" width="11" height="13" fill="#36393b" stroke="#7a8185" stroke-width="1"/><path d="M4 0.5v13M8 0.5v13M0.5 3.5h11M0.5 6.5h11M0.5 9.5h11" stroke="#5c6266" stroke-width="0.9"/><path d="M2.2 4.5v1.2M2.2 7.5v1.2M2.2 10.5v1.2" stroke="#3d9ee0" stroke-width="1.3"/></svg>
<div class="t" style="left:576.5px;top:101.56px;font-size:10.5px;color:#d0705f;font-weight:normal;font-family:'Liberation Sans';font-style:normal;transform:scaleX(0.9568);">docker-compose.development.yml</div>
<svg class="a" style="left:732.9px;top:97.0px;" width="10.5" height="10.5" viewBox="0 0 10.5 10.5"><path d="M2 2l6.5 6.5M8.5 2L2 8.5" stroke="#6a6d70" stroke-width="1"/></svg>
<div class="a" style="left:749px;top:91px;width:67.5px;height:20px;background:#4e5254;"></div>
<div class="a" style="left:749px;top:109px;width:67.5px;height:2.5px;background:#4a8fc7;"></div>
<svg class="a" style="left:757.5px;top:95px;" width="11" height="14" viewBox="0 0 11 14"><path d="M3 0.5h6.8v13H0.5V3z" fill="#8f979c"/><path d="M0.5 3L3 0.5V3z" fill="#3c3f41"/></svg>
<svg class="a" style="left:760.1px;top:99.2px;" width="10.5" height="10.5" viewBox="0 0 10.5 10.5"><g transform="scale(0.875)"><path d="M6 0.5c-2.6 0-2.5 1.2-2.5 1.2V3h2.6v0.6H2.2S0.5 3.4 0.5 6c0 2.6 1.5 2.5 1.5 2.5h0.9V7.3s0-1.5 1.5-1.5h2.5s1.4 0 1.4-1.4V1.9S8.5 0.5 6 0.5z" fill="#3d8ccf"/><path d="M6 11.5c2.6 0 2.5-1.2 2.5-1.2V9H5.9V8.4h3.9s1.7 0.2 1.7-2.4c0-2.6-1.5-2.5-1.5-2.5H9.1v1.2s0 1.5-1.5 1.5H5.1s-1.4 0-1.4 1.4v2.5S3.5 11.5 6 11.5z" fill="#e6c132"/></g></svg>
<div class="t" style="left:772px;top:101.56px;font-size:10.5px;color:#c8c8c8;font-weight:normal;font-family:'Liberation Sans';font-style:normal;transform:scaleX(1.0122);">pg.py</div>
<svg class="a" style="left:801.8px;top:97.0px;" width="10.5" height="10.5" viewBox="0 0 10.5 10.5"><path d="M2 2l6.5 6.5M8.5 2L2 8.5" stroke="#6a6d70" stroke-width="1"/></svg>
<div class="a" style="left:376px;top:112px;width:600px;height:314px;background:#000;"></div>
<div class="a" style="left:376px;top:112px;width:600px;height:313.5px;overflow:hidden"><div class="a" style="left:-376px;top:-112px;width:1024px;height:912px">
<div class="a" style="left:376px;top:272.2px;width:63.3px;height:14.6px;background:#232323;"></div>
<div class="a" style="left:439.5px;top:272.2px;width:537px;height:14.6px;background:#2d5f9a;"></div>
<div class="a" style="left:439px;top:112px;width:1px;height:314px;background:#222222;"></div>
<div class="a" style="left:472.7px;top:112px;width:1.2px;height:86px;background:#5e5e5e;"></div>
<div class="a" style="left:472.7px;top:229.5px;width:1.2px;height:183.5px;background:#5e5e5e;"></div>
<div class="a" style="left:500.0px;top:112px;width:1.2px;height:58px;background:#5e5e5e;"></div>
<div class="a" style="left:500.0px;top:315.5px;width:1.2px;height:97.5px;background:#5e5e5e;"></div>
<div class="a" style="left:527.4px;top:373.4px;width:1.2px;height:39.60000000000002px;background:#5e5e5e;"></div>
<div class="t m" style="left:380.5px;top:120.13px;font-size:11.9px;color:#d0d0d0;font-weight:normal;font-family:'Liberation Mono';font-style:normal;transform:scaleX(0.8549);">138</div>
<div class="t m" style="left:380.5px;top:134.73px;font-size:11.9px;color:#d0d0d0;font-weight:normal;font-family:'Liberation Mono';font-style:normal;transform:scaleX(0.8549);">139</div>
<div class="t m" style="left:380.5px;top:149.33px;font-size:11.9px;color:#d0d0d0;font-weight:normal;font-family:'Liberation Mono';font-style:normal;transform:scaleX(0.8549);">140</div>
<div class="t m" style="left:380.5px;top:163.93px;font-size:11.9px;color:#d0d0d0;font-weight:normal;font-family:'Liberation Mono';font-style:normal;transform:scaleX(0.8549);">141</div>
<div class="t m" style="left:380.5px;top:178.53px;font-size:11.9px;color:#d0d0d0;font-weight:normal;font-family:'Liberation Mono';font-style:normal;transform:scaleX(0.8549);">142</div>
<div class="t m" style="left:380.5px;top:193.13px;font-size:11.9px;color:#d0d0d0;font-weight:normal;font-family:'Liberation Mono';font-style:normal;transform:scaleX(0.8549);">143</div>
<div class="t m" style="left:380.5px;top:207.73px;font-size:11.9px;color:#d0d0d0;font-weight:normal;font-family:'Liberation Mono';font-style:normal;transform:scaleX(0.8549);">144</div>
<div class="t m" style="left:380.5px;top:222.33px;font-size:11.9px;color:#d0d0d0;font-weight:normal;font-family:'Liberation Mono';font-style:normal;transform:scaleX(0.8549);">145</div>
<div class="t m" style="left:380.5px;top:236.93px;font-size:11.9px;color:#d0d0d0;font-weight:normal;font-family:'Liberation Mono';font-style:normal;transform:scaleX(0.8549);">146</div>
<div class="t m" style="left:380.5px;top:251.53px;font-size:11.9px;color:#d0d0d0;font-weight:normal;font-family:'Liberation Mono';font-style:normal;transform:scaleX(0.8549);">147</div>
<div class="t m" style="left:380.5px;top:266.13px;font-size:11.9px;color:#d0d0d0;font-weight:normal;font-family:'Liberation Mono';font-style:normal;transform:scaleX(0.8549);">148</div>
<div class="t m" style="left:380.5px;top:280.73px;font-size:11.9px;color:#d0d0d0;font-weight:normal;font-family:'Liberation Mono';font-style:normal;transform:scaleX(0.8549);">149</div>
<div class="t m" style="left:380.5px;top:295.33px;font-size:11.9px;color:#d0d0d0;font-weight:normal;font-family:'Liberation Mono';font-style:normal;transform:scaleX(0.8549);">150</div>
<div class="t m" style="left:380.5px;top:309.93px;font-size:11.9px;color:#d0d0d0;font-weight:normal;font-family:'Liberation Mono';font-style:normal;transform:scaleX(0.8549);">151</div>
<div class="t m" style="left:380.5px;top:324.53px;font-size:11.9px;color:#d0d0d0;font-weight:normal;font-family:'Liberation Mono';font-style:normal;transform:scaleX(0.8549);">152</div>
<div class="t m" style="left:380.5px;top:339.13px;font-size:11.9px;color:#d0d0d0;font-weight:normal;font-family:'Liberation Mono';font-style:normal;transform:scaleX(0.8549);">153</div>
<div class="t m" style="left:380.5px;top:353.73px;font-size:11.9px;color:#d0d0d0;font-weight:normal;font-family:'Liberation Mono';font-style:normal;transform:scaleX(0.8549);">154</div>
<div class="t m" style="left:380.5px;top:368.33px;font-size:11.9px;color:#d0d0d0;font-weight:normal;font-family:'Liberation Mono';font-style:normal;transform:scaleX(0.8549);">155</div>
<div class="t m" style="left:380.5px;top:382.93px;font-size:11.9px;color:#d0d0d0;font-weight:normal;font-family:'Liberation Mono';font-style:normal;transform:scaleX(0.8549);">156</div>
<div class="t m" style="left:380.5px;top:397.53px;font-size:11.9px;color:#d0d0d0;font-weight:normal;font-family:'Liberation Mono';font-style:normal;transform:scaleX(0.8549);">157</div>
<div class="t m" style="left:380.5px;top:412.13px;font-size:11.9px;color:#d0d0d0;font-weight:normal;font-family:'Liberation Mono';font-style:normal;transform:scaleX(0.8549);">158</div>
<div class="t m" style="left:380.5px;top:426.73px;font-size:11.9px;color:#d0d0d0;font-weight:normal;font-family:'Liberation Mono';font-style:normal;transform:scaleX(0.8549);">159</div>
<svg class="a" style="left:434.5px;top:187.8px;" width="10" height="10" viewBox="0 0 10 10"><path d="M1 9h8V4L5 0.5 1 4z" fill="#000" stroke="#4a4a4a" stroke-width="1"/><path d="M3 5h4" stroke="#4a4a4a" stroke-width="1"/></svg>
<svg class="a" style="left:434.5px;top:217.0px;" width="10" height="10" viewBox="0 0 10 10"><path d="M1 1h8v5l-4 3.5L1 6z" fill="#000" stroke="#4a4a4a" stroke-width="1"/><path d="M3 5h4" stroke="#4a4a4a" stroke-width="1"/></svg>
<svg class="a" style="left:434.5px;top:304.59999999999997px;" width="10" height="10" viewBox="0 0 10 10"><path d="M1 1h8v5l-4 3.5L1 6z" fill="#000" stroke="#4a4a4a" stroke-width="1"/><path d="M3 5h4" stroke="#4a4a4a" stroke-width="1"/></svg>
<svg class="a" style="left:434.5px;top:363.0px;" width="10" height="10" viewBox="0 0 10 10"><path d="M1 1h8v5l-4 3.5L1 6z" fill="#000" stroke="#4a4a4a" stroke-width="1"/><path d="M3 5h4" stroke="#4a4a4a" stroke-width="1"/></svg>
<svg class="a" style="left:414px;top:214.5px;" width="14" height="13" viewBox="0 0 14 13"><circle cx="6.4" cy="7.3" r="3.7" fill="#6fb0de"/><circle cx="6.4" cy="7.3" r="1.5" fill="none" stroke="#3a6f9a" stroke-width="0.9"/><path d="M11 12V3.5" stroke="#d9604e" stroke-width="1.3"/><path d="M9 4.5l2-2.5 2 2.5z" fill="#d9604e"/></svg>
<div class="a" style="left:417.2px;top:274.2px;width:10px;height:10px;border-radius:50%;background:radial-gradient(circle at 50% 30%,#f08a80,#e05a50)"></div>
<svg class="a" style="left:450.3px;top:269.5px;" width="12" height="15" viewBox="0 0 12 15"><circle cx="6" cy="5" r="4.5" fill="#f4b942"/><circle cx="6" cy="5" r="2.2" fill="#f8cf6a"/><rect x="4" y="9.6" width="4" height="3" rx="0.8" fill="#8a8f94"/></svg>
<div class="a" style="left:444.3px;top:272.6px;width:1.4px;height:14px;background:#c8c8c8;"></div>
<div class="t m" style="left:703.84px;top:120.11px;font-size:12px;color:#d4d4d4;font-weight:normal;font-family:'Liberation Mono';font-style:normal;letter-spacing:-0.371px;"><span style="color:#d596de">port</span><span style="color:#e6dc2c">=</span><span style="color:#a5619d">self</span><span style="color:#e6dc2c">.</span><span style="color:#d4d4d4">configuration</span><span style="color:#e6dc2c">.</span><span style="color:#d4d4d4">get</span><span style="color:#ef5454">(</span><span style="color:#e03de0">&#x27;port&#x27;</span><span style="color:#ef5454">)</span><span style="color:#e6dc2c">,</span></div>
<div class="t m" style="left:703.84px;top:134.71px;font-size:12px;color:#d4d4d4;font-weight:normal;font-family:'Liberation Mono';font-style:normal;letter-spacing:-0.371px;"><span style="color:#d596de">dbname</span><span style="color:#e6dc2c">=</span><span style="color:#a5619d">self</span><span style="color:#e6dc2c">.</span><span style="color:#d4d4d4">configuration</span><span style="color:#e6dc2c">.</span><span style="color:#d4d4d4">get</span><span style="color:#ef5454">(</span><span style="color:#e03de0">&#x27;dbname&#x27;</span><span style="color:#ef5454">)</span><span style="color:#e6dc2c">,</span></div>
<div class="t m" style="left:703.84px;top:149.31px;font-size:12px;color:#d4d4d4;font-weight:normal;font-family:'Liberation Mono';font-style:normal;letter-spacing:-0.371px;"><span style="color:#d596de">sslmode</span><span style="color:#e6dc2c">=</span><span style="color:#a5619d">self</span><span style="color:#e6dc2c">.</span><span style="color:#d4d4d4">configuration</span><span style="color:#e6dc2c">.</span><span style="color:#d4d4d4">get</span><span style="color:#ef5454">(</span><span style="color:#e03de0">&#x27;sslmode&#x27;</span><span style="color:#ef5454">)</span><span style="color:#e6dc2c">,</span></div>
<div class="t m" style="left:703.84px;top:163.91px;font-size:12px;color:#d4d4d4;font-weight:normal;font-family:'Liberation Mono';font-style:normal;letter-spacing:-0.371px;"><span style="color:#d596de">async</span><span style="color:#e6dc2c">=</span><span style="color:#8787f0">True</span><span style="color:#ef5454">)</span></div>
<div class="t m" style="left:498.94px;top:193.11px;font-size:12px;color:#d4d4d4;font-weight:normal;font-family:'Liberation Mono';font-style:normal;letter-spacing:-0.371px;"><span style="color:#5fd84a;font-weight:bold">return</span><span style="color:#d4d4d4"> connection</span></div>
<div class="t m" style="left:471.62px;top:222.31px;font-size:12px;color:#d4d4d4;font-weight:normal;font-family:'Liberation Mono';font-style:normal;letter-spacing:-0.371px;"><span style="color:#5fd84a;font-weight:bold">def</span><span style="color:#d4d4d4"> run_query</span><span style="color:#ef5454">(</span><span style="color:#a5619d">self</span><span style="color:#e6dc2c">,</span><span style="color:#e03de0"> query</span><span style="color:#e6dc2c">,</span><span style="color:#e03de0"> user</span><span style="color:#ef5454">)</span><span style="color:#e6dc2c">:</span><span style="color:#8c8c8c;font-style:italic">  self: </span><span style="color:#e39b3b;font-style:italic">&lt;redash.query_runner.pg.PostgreSQL object at 0x10bf76cd0&gt;</span></div>
<div class="t m" style="left:498.94px;top:236.91px;font-size:12px;color:#d4d4d4;font-weight:normal;font-family:'Liberation Mono';font-style:normal;letter-spacing:-0.371px;"><span style="color:#d4d4d4">connection </span><span style="color:#e6dc2c">=</span><span style="color:#a5619d"> self</span><span style="color:#e6dc2c">.</span><span style="color:#d4d4d4">_get_connection</span><span style="color:#ef5454">()</span><span style="color:#8c8c8c;font-style:italic">  connection: </span><span style="color:#e39b3b;font-style:italic">&lt;connection object at 0x10ccbdad0&gt;</span></div>
<div class="t m" style="left:498.94px;top:251.51px;font-size:12px;color:#d4d4d4;font-weight:normal;font-family:'Liberation Mono';font-style:normal;letter-spacing:-0.371px;"><span style="color:#d4d4d4">_wait</span><span style="color:#ef5454">(</span><span style="color:#d4d4d4">connection</span><span style="color:#e6dc2c">,</span><span style="color:#d596de"> timeout</span><span style="color:#e6dc2c">=</span><span style="color:#d85bd8">10</span><span style="color:#ef5454">)</span></div>
<div class="t m" style="left:498.94px;top:280.71px;font-size:12px;color:#d4d4d4;font-weight:normal;font-family:'Liberation Mono';font-style:normal;letter-spacing:-0.371px;"><span style="color:#d4d4d4">cursor </span><span style="color:#e6dc2c">=</span><span style="color:#d4d4d4"> connection</span><span style="color:#e6dc2c">.</span><span style="color:#d4d4d4">cursor</span><span style="color:#ef5454">()</span></div>
<div class="t m" style="left:498.94px;top:309.91px;font-size:12px;color:#d4d4d4;font-weight:normal;font-family:'Liberation Mono';font-style:normal;letter-spacing:-0.371px;"><span style="color:#5fd84a;font-weight:bold">try</span><span style="color:#e6dc2c">:</span></div>
<div class="t m" style="left:526.26px;top:324.51px;font-size:12px;color:#d4d4d4;font-weight:normal;font-family:'Liberation Mono';font-style:normal;letter-spacing:-0.371px;"><span style="color:#d4d4d4">cursor</span><span style="color:#e6dc2c">.</span><span style="color:#d4d4d4">execute</span><span style="color:#ef5454">(</span><span style="color:#e03de0">query</span><span style="color:#ef5454">)</span></div>
<div class="t m" style="left:526.26px;top:339.11px;font-size:12px;color:#d4d4d4;font-weight:normal;font-family:'Liberation Mono';font-style:normal;letter-spacing:-0.371px;"><span style="color:#d4d4d4">_wait</span><span style="color:#ef5454">(</span><span style="color:#d4d4d4">connection</span><span style="color:#ef5454">)</span></div>
<div class="t m" style="left:526.26px;top:368.31px;font-size:12px;color:#d4d4d4;font-weight:normal;font-family:'Liberation Mono';font-style:normal;letter-spacing:-0.371px;"><span style="color:#5fd84a;font-weight:bold">if</span><span style="color:#d4d4d4"> cursor</span><span style="color:#e6dc2c">.</span><span style="color:#d4d4d4">description </span><span style="color:#5fd84a;font-weight:bold">is not</span><span style="color:#8787f0"> None</span><span style="color:#e6dc2c">:</span></div>
<div class="t m" style="left:553.58px;top:382.91px;font-size:12px;color:#d4d4d4;font-weight:normal;font-family:'Liberation Mono';font-style:normal;letter-spacing:-0.371px;"><span style="color:#d4d4d4">columns </span><span style="color:#e6dc2c">=</span><span style="color:#a5619d"> self</span><span style="color:#e6dc2c">.</span><span style="color:#d4d4d4">fetch_columns</span><span style="color:#ef5454">([(</span><span style="color:#d4d4d4">i</span><span style="color:#ef5454">[</span><span style="color:#d85bd8">0</span><span style="color:#ef5454">]</span><span style="color:#e6dc2c">,</span><span style="color:#d4d4d4"> types_map</span><span style="color:#e6dc2c">.</span><span style="color:#d4d4d4">get</span><span style="color:#ef5454">(</span><span style="color:#d4d4d4">i</span><span style="color:#ef5454">[</span><span style="color:#d85bd8">1</span><span style="color:#ef5454">]</span><span style="color:#e6dc2c">,</span><span style="color:#8787f0"> None</span><span style="color:#ef5454">))</span><span style="color:#5fd84a;font-weight:bold"> for</span><span style="color:#d4d4d4"> i </span><span style="color:#5fd84a;font-weight:bold">in</span><span style="color:#d4d4d4"> cursor</span><span style="color:#e6dc2c">.</span><span style="color:#d4d4d4">description</span><span style="color:#ef5454">])</span></div>
<div class="t m" style="left:553.58px;top:397.51px;font-size:12px;color:#d4d4d4;font-weight:normal;font-family:'Liberation Mono';font-style:normal;letter-spacing:-0.371px;"><span style="color:#d4d4d4">rows </span><span style="color:#e6dc2c">=</span><span style="color:#ef5454"> [</span><span style="color:#8787f0">dict</span><span style="color:#ef5454">(</span><span style="color:#8787f0">zip</span><span style="color:#ef5454">((</span><span style="color:#d4d4d4">c</span><span style="color:#ef5454">[</span><span style="color:#e03de0">&#x27;name&#x27;</span><span style="color:#ef5454">]</span><span style="color:#5fd84a;font-weight:bold"> for</span><span style="color:#d4d4d4"> c </span><span style="color:#5fd84a;font-weight:bold">in</span><span style="color:#d4d4d4"> columns</span><span style="color:#ef5454">)</span><span style="color:#e6dc2c">,</span><span style="color:#d4d4d4"> row</span><span style="color:#ef5454">))</span><span style="color:#5fd84a;font-weight:bold"> for</span><span style="color:#d4d4d4"> row </span><span style="color:#5fd84a;font-weight:bold">in</span><span style="color:#d4d4d4"> cursor</span><span style="color:#ef5454">]</span></div>
<svg class="a" style="left:915.5699999999999px;top:139.9px;" width="43.0" height="3" viewBox="0 0 43.0 3"><path d="M0 2 L1.0 0.5 L3.0 2.5 L5.0 0.5 L7.0 2.5 L9.0 0.5 L11.0 2.5 L13.0 0.5 L15.0 2.5 L17.0 0.5 L19.0 2.5 L21.0 0.5 L23.0 2.5 L25.0 0.5 L27.0 2.5 L29.0 0.5 L31.0 2.5 L33.0 0.5 L35.0 2.5 L37.0 0.5 L39.0 2.5 L41.0 0.5" fill="none" stroke="#9a9420" stroke-width="0.8"/></svg>
<svg class="a" style="left:922.4000000000001px;top:154.5px;" width="49.8" height="3" viewBox="0 0 49.8 3"><path d="M0 2 L1.0 0.5 L3.0 2.5 L5.0 0.5 L7.0 2.5 L9.0 0.5 L11.0 2.5 L13.0 0.5 L15.0 2.5 L17.0 0.5 L19.0 2.5 L21.0 0.5 L23.0 2.5 L25.0 0.5 L27.0 2.5 L29.0 0.5 L31.0 2.5 L33.0 0.5 L35.0 2.5 L37.0 0.5 L39.0 2.5 L41.0 0.5 L43.0 2.5 L45.0 0.5 L47.0 2.5" fill="none" stroke="#9a9420" stroke-width="0.8"/></svg>
<div class="a" style="left:445.8px;top:415.2px;width:117px;height:8.4px;border-radius:4.2px;background:#3a3a3a"></div>
<div class="a" style="left:965.8px;top:113.9px;width:8.6px;height:8.3px;background:#8f8a00;"></div>
<div class="a" style="left:964.5px;top:154.8px;width:11.5px;height:2.6px;background:#8f8a00;"></div>
<div class="a" style="left:964.5px;top:158.2px;width:11.5px;height:2.8px;background:#8f8a00;"></div>
<div class="a" style="left:966px;top:263.8px;width:8.2px;height:29px;border-radius:4.1px;background:rgba(255,255,255,0.22)"></div>
<div class="a" style="left:964px;top:296px;width:12px;height:2px;background:#b8b87c;"></div>
</div></div>
<div class="a" style="left:376px;top:425px;width:600px;height:1.6px;background:#8c8c8c;"></div>
<div class="a" style="left:376px;top:426.6px;width:600px;height:17.2px;background:#000;"></div>
<div class="t" style="left:448.5px;top:435.76px;font-size:10.5px;color:#8a8a8a;font-weight:normal;font-family:'Liberation Sans';font-style:normal;transform:scaleX(1.0053);">PostgreSQL</div>
<div class="t" style="left:514.5px;top:435.59px;font-size:11px;color:#8a8a8a;font-weight:normal;font-family:'Liberation Sans';font-style:normal;">›</div>
<div class="t" style="left:526.5px;top:435.76px;font-size:10.5px;color:#8a8a8a;font-weight:normal;font-family:'Liberation Sans';font-style:normal;transform:scaleX(1.0134);">run_query()</div>
<div class="a" style="left:65px;top:443.8px;width:911px;height:1.6px;background:#48494b;"></div>
<div class="a" style="left:65px;top:464px;width:911px;height:1px;background:#2f3133;"></div>
<div class="t" style="left:70.8px;top:454.01px;font-size:11.5px;color:#8f8f8f;font-weight:normal;font-family:'Liberation Sans';font-style:normal;transform:scaleX(0.8322);">Debug</div>
<svg class="a" style="left:102.5px;top:450.5px;" width="12.5" height="12.5" viewBox="0 0 12.5 12.5"><g transform="scale(1.0416666666666667)"><path d="M6 0.5c-2.6 0-2.5 1.2-2.5 1.2V3h2.6v0.6H2.2S0.5 3.4 0.5 6c0 2.6 1.5 2.5 1.5 2.5h0.9V7.3s0-1.5 1.5-1.5h2.5s1.4 0 1.4-1.4V1.9S8.5 0.5 6 0.5z" fill="#3d8ccf"/><path d="M6 11.5c2.6 0 2.5-1.2 2.5-1.2V9H5.9V8.4h3.9s1.7 0.2 1.7-2.4c0-2.6-1.5-2.5-1.5-2.5H9.1v1.2s0 1.5-1.5 1.5H5.1s-1.4 0-1.4 1.4v2.5S3.5 11.5 6 11.5z" fill="#e6c132"/><circle cx="10.3" cy="10.3" r="1.8" fill="#2ec834"/></g></svg>
<div class="t" style="left:119px;top:454.01px;font-size:11.5px;color:#9a9a9a;font-weight:normal;font-family:'Liberation Sans';font-style:normal;transform:scaleX(0.8839);">worker</div>
<svg class="a" style="left:934.5px;top:449.0px;" width="12" height="12" viewBox="0 0 12 12"><circle cx="6" cy="6" r="3.4" fill="none" stroke="#a0a0a0" stroke-width="2.4" stroke-dasharray="1.7 1"/><circle cx="6" cy="6" r="2.6" fill="none" stroke="#a0a0a0" stroke-width="1.4"/></svg>
<svg class="a" style="left:946.5px;top:452.5px;" width="7" height="7" viewBox="0 0 7 7"><path d="M1 2.5h5l-2.5 3z" fill="#a0a0a0"/></svg>
<svg class="a" style="left:958.5px;top:449.0px;" width="12" height="12" viewBox="0 0 12 12"><path d="M6 1v6M3.5 4.5L6 7l2.5-2.5" stroke="#a0a0a0" stroke-width="1.2" fill="none"/><rect x="1" y="9" width="10" height="2" fill="#a0a0a0"/></svg>
<div class="a" style="left:90.6px;top:465px;width:1.2px;height:341px;background:#454648;"></div>
<div class="a" style="left:91.5px;top:465px;width:52.6px;height:21px;background:#4e5254;"></div>
<div class="t" style="left:97.2px;top:474.81px;font-size:11.5px;color:#d4d4d4;font-weight:normal;font-family:'Liberation Sans';font-style:normal;transform:scaleX(0.8573);">Debugger</div>
<svg class="a" style="left:149.5px;top:469px;" width="13" height="12" viewBox="0 0 13 12"><rect x="0.5" y="0.5" width="12" height="11" fill="#42474b" stroke="#4a9ad8" stroke-width="1"/><rect x="0.5" y="0.5" width="12" height="2.5" fill="#4a9ad8"/><path d="M3 6h7M3 8.5h5" stroke="#9aa7b0" stroke-width="1"/></svg>
<div class="t" style="left:165.2px;top:474.81px;font-size:11.5px;color:#c4c4c4;font-weight:normal;font-family:'Liberation Sans';font-style:normal;transform:scaleX(0.8366);">Console</div>
<svg class="a" style="left:205.0px;top:470.5px;" width="12" height="10" viewBox="0 0 12 10"><path d="M1 6h6M5 4l2 2-2 2" stroke="#9a9a9a" stroke-width="1" fill="none"/><rect x="9" y="2" width="2" height="2" fill="#9a9a9a"/></svg>
<div class="a" style="left:218.3px;top:466px;width:1px;height:19px;background:#303234;"></div>
<svg class="a" style="left:221.8px;top:468.2px;" width="15" height="14" viewBox="0 0 15 14"><path d="M1 1l6 5-6 5z" fill="#e05a4e"/><path d="M6 6.5h8M6 9.5h8M6 12.5h8M8 3.5h6" stroke="#4a9ad8" stroke-width="1.3"/></svg>
<div class="a" style="left:242.2px;top:467px;width:1px;height:17px;background:repeating-linear-gradient(#5a5d5f 0 1px,transparent 1px 3px)"></div>
<svg class="a" style="left:248.3px;top:467.2px;" width="15" height="16" viewBox="0 0 15 16"><rect x="1.5" y="1" width="12" height="1.8" fill="#9aa7b0"/><rect x="1.5" y="13" width="12" height="1.8" fill="#9aa7b0"/><path d="M7.5 4v4.5M3.5 7.5h8l-4 4z" stroke="#3d96d6" stroke-width="2.2" fill="#3d96d6"/></svg>
<svg class="a" style="left:269.8px;top:467.2px;" width="15" height="16" viewBox="0 0 15 16"><path d="M2 2l7 7" stroke="#3d96d6" stroke-width="2.4"/><path d="M11 4v7H4z" fill="#3d96d6"/><rect x="1.5" y="13" width="12" height="1.8" fill="#9aa7b0"/></svg>
<svg class="a" style="left:291.4px;top:467.2px;" width="15" height="16" viewBox="0 0 15 16"><path d="M2 2l7 7" stroke="#3d96d6" stroke-width="2.4"/><path d="M11 4v7H4z" fill="#3d96d6"/><rect x="1.5" y="13" width="12" height="1.8" fill="#9aa7b0"/><path d="M0 8.5h3M11.5 8.5h3" stroke="#e05a4e" stroke-width="1.3"/></svg>
<svg class="a" style="left:312.5px;top:467.2px;" width="15" height="16" viewBox="0 0 15 16"><path d="M2 2l7 7" stroke="#5b5e60" stroke-width="2.4"/><path d="M11 4v7H4z" fill="#5b5e60"/><rect x="1.5" y="13" width="12" height="1.8" fill="#5b5e60"/></svg>
<svg class="a" style="left:334.1px;top:467.2px;" width="15" height="16" viewBox="0 0 15 16"><path d="M2.5 11.5l6.5-6.5" stroke="#3d96d6" stroke-width="2.4"/><path d="M13 1.5v7.5l-7.5-7.5z" fill="#3d96d6"/><rect x="1.5" y="13" width="12" height="1.8" fill="#9aa7b0"/></svg>
<svg class="a" style="left:355.5px;top:467.2px;" width="15" height="16" viewBox="0 0 15 16"><path d="M1 2l6 6" stroke="#3d96d6" stroke-width="2.2"/><path d="M9 3.5v6H3z" fill="#3d96d6"/><path d="M9.5 6.5h4M11.5 6.5v9M9.5 15.5h4" stroke="#c8c8c8" stroke-width="1.1"/></svg>
<div class="a" style="left:376.2px;top:467px;width:1px;height:17px;background:repeating-linear-gradient(#5a5d5f 0 1px,transparent 1px 3px)"></div>
<svg class="a" style="left:382.2px;top:467.7px;" width="15" height="15" viewBox="0 0 15 15"><rect x="1.5" y="1.5" width="12" height="12" fill="#9aa7b0"/><rect x="3" y="3" width="9" height="3" fill="#4a9ad8"/><rect x="9" y="7.5" width="3" height="2" fill="#e05a4e"/><rect x="9" y="10.5" width="3" height="2" fill="#3fbf45"/><path d="M3 8.5h4M3 11.5h4" stroke="#5b5e60" stroke-width="1.2"/></svg>
<div class="a" style="left:91.5px;top:486px;width:884.5px;height:4.3px;background:#46494b;"></div>
<div class="a" style="left:91.5px;top:490.3px;width:320px;height:22.5px;background:#434e61;"></div>
<svg class="a" style="left:95.8px;top:496px;" width="12" height="12" viewBox="0 0 12 12"><rect x="0.5" y="0.5" width="9" height="9" fill="#3c3f41" stroke="#8a9096" stroke-width="0.9"/><rect x="2" y="2" width="9.5" height="9.5" fill="#2f6fa8" stroke="#9aa7b0" stroke-width="0.9"/><path d="M5.5 5l-1.5 1.3 1.5 1.3M7.5 6.5l1.5 1.3-1.5 1.3" stroke="#e0e8f0" stroke-width="0.8" fill="none"/></svg>
<div class="t" style="left:111.4px;top:499.72px;font-size:11.2px;color:#cfcfcf;font-weight:normal;font-family:'Liberation Sans';font-style:normal;transform:scaleX(0.8598);">Frames</div>
<svg class="a" style="left:397.0px;top:495.5px;" width="12" height="10" viewBox="0 0 12 10"><path d="M1 6h6M5 4l2 2-2 2" stroke="#9a9a9a" stroke-width="1" fill="none"/><rect x="9" y="2" width="2" height="2" fill="#9a9a9a"/></svg>
<div class="a" style="left:410.8px;top:490.3px;width:1.3px;height:316px;background:#4a4a4c;"></div>
<div class="a" style="left:412.2px;top:490.3px;width:563.8px;height:22.5px;background:#434e61;"></div>
<svg class="a" style="left:417px;top:496.5px;" width="11" height="11" viewBox="0 0 11 11"><rect x="0" y="0.5" width="11" height="2.6" fill="#d9a24a"/><rect x="0" y="4.2" width="11" height="2.6" fill="#d9a24a"/><rect x="0" y="7.9" width="11" height="2.6" fill="#d9a24a"/></svg>
<div class="t" style="left:431.7px;top:499.42px;font-size:11.2px;color:#cfcfcf;font-weight:normal;font-family:'Liberation Sans';font-style:normal;transform:scaleX(0.8907);">Variables</div>
<svg class="a" style="left:961.0px;top:495.5px;" width="12" height="10" viewBox="0 0 12 10"><path d="M1 6h6M5 4l2 2-2 2" stroke="#9a9a9a" stroke-width="1" fill="none"/><rect x="9" y="2" width="2" height="2" fill="#9a9a9a"/></svg>
<div class="a" style="left:412.2px;top:512.8px;width:563.8px;height:1px;background:#35383a;"></div>
<div class="a" style="left:92.4px;top:514.9px;width:267px;height:22.5px;border:1px solid #5e6163;border-radius:3px;background:#3b3e40"></div>
<div class="a" style="left:339px;top:516px;width:1px;height:20.5px;background:#5e6163;"></div>
<svg class="a" style="left:343.3px;top:521.3px;" width="12" height="10" viewBox="0 0 12 10"><path d="M1.5 2.5h9l-4.5 5.5z" fill="#c8c8c8"/></svg>
<svg class="a" style="left:97.7px;top:518.5px;" width="14" height="14" viewBox="0 0 14 14"><rect x="1" y="1" width="7" height="1.6" fill="#c9a76e"/><rect x="1.8" y="2.5" width="5.4" height="9.5" fill="#d9a24a"/><path d="M2.5 4h4M2.5 6h4M2.5 8h4M2.5 10h4" stroke="#b07a20" stroke-width="0.6"/><rect x="1" y="11.8" width="7" height="1.6" fill="#c9a76e"/><circle cx="10" cy="10.5" r="3.3" fill="#e8473b"/></svg>
<div class="t" style="left:114.2px;top:526.11px;font-size:11.8px;color:#c8c8c8;font-weight:normal;font-family:'Liberation Sans';font-style:normal;transform:scaleX(0.9738);">MainThread</div>
<div class="a" style="left:363.8px;top:517px;width:1px;height:19px;background:repeating-linear-gradient(#5a5d5f 0 1px,transparent 1px 3px)"></div>
<svg class="a" style="left:370.5px;top:520.0px;" width="12" height="12" viewBox="0 0 12 12"><path d="M6 1l5 5H8v5H4V6H1z" fill="#5b5e60"/></svg>
<svg class="a" style="left:392.0px;top:520.0px;" width="12" height="12" viewBox="0 0 12 12"><path d="M6 11l5-5H8V1H4v5H1z" fill="#3d9ee0"/></svg>
<div class="a" style="left:91.5px;top:538.8px;width:319.5px;height:267.2px;overflow:hidden"><div class="a" style="left:-91.5px;top:-538.8px;width:1024px;height:912px">
<div class="a" style="left:92px;top:539.5px;width:307.2px;height:17.1px;background:#2e65ca;"></div>
<svg class="a" style="left:98.5px;top:543.2px;" width="12" height="12" viewBox="0 0 12 12"><rect x="0.5" y="0.5" width="9" height="9" fill="#3c3f41" stroke="#8a9096" stroke-width="0.9"/><rect x="2" y="2" width="9.5" height="9.5" fill="#2f6fa8" stroke="#9aa7b0" stroke-width="0.9"/><path d="M5.5 5l-1.5 1.3 1.5 1.3M7.5 6.5l1.5 1.3-1.5 1.3" stroke="#e0e8f0" stroke-width="0.8" fill="none"/></svg>
<div class="t" style="left:113.8px;top:549.07px;font-size:11.9px;color:#ffffff;font-weight:normal;font-family:'Liberation Sans';font-style:normal;transform:scaleX(1.0090);">run_query, pg.py:149</div>
<svg class="a" style="left:98.5px;top:560.23px;" width="12" height="12" viewBox="0 0 12 12"><rect x="0.5" y="0.5" width="9" height="9" fill="#3c3f41" stroke="#8a9096" stroke-width="0.9"/><rect x="2" y="2" width="9.5" height="9.5" fill="#2f6fa8" stroke="#9aa7b0" stroke-width="0.9"/><path d="M5.5 5l-1.5 1.3 1.5 1.3M7.5 6.5l1.5 1.3-1.5 1.3" stroke="#e0e8f0" stroke-width="0.8" fill="none"/></svg>
<div class="t" style="left:113.8px;top:566.10px;font-size:11.9px;color:#bbbbbb;font-weight:normal;font-family:'Liberation Sans';font-style:normal;transform:scaleX(1.0177);">run, queries.py:447</div>
<svg class="a" style="left:98.5px;top:577.26px;" width="12" height="12" viewBox="0 0 12 12"><rect x="0.5" y="0.5" width="9" height="9" fill="#3c3f41" stroke="#8a9096" stroke-width="0.9"/><rect x="2" y="2" width="9.5" height="9.5" fill="#2f6fa8" stroke="#9aa7b0" stroke-width="0.9"/><path d="M5.5 5l-1.5 1.3 1.5 1.3M7.5 6.5l1.5 1.3-1.5 1.3" stroke="#e0e8f0" stroke-width="0.8" fill="none"/></svg>
<div class="t" style="left:113.8px;top:583.13px;font-size:11.9px;color:#bbbbbb;font-weight:normal;font-family:'Liberation Sans';font-style:normal;transform:scaleX(1.0017);">execute_query, queries.py:522</div>
<svg class="a" style="left:98.5px;top:594.2900000000001px;" width="12" height="12" viewBox="0 0 12 12"><rect x="0.5" y="0.5" width="9" height="9" fill="#3c3f41" stroke="#8a9096" stroke-width="0.9"/><rect x="2" y="2" width="9.5" height="9.5" fill="#2f6fa8" stroke="#9aa7b0" stroke-width="0.9"/><path d="M5.5 5l-1.5 1.3 1.5 1.3M7.5 6.5l1.5 1.3-1.5 1.3" stroke="#e0e8f0" stroke-width="0.8" fill="none"/></svg>
<div class="t" style="left:113.8px;top:600.16px;font-size:11.9px;color:#bbbbbb;font-weight:normal;font-family:'Liberation Sans';font-style:normal;transform:scaleX(0.9743);">__protected_call__, trace.py:438</div>
<svg class="a" style="left:98.5px;top:611.32px;" width="12" height="12" viewBox="0 0 12 12"><rect x="0.5" y="0.5" width="9" height="9" fill="#3c3f41" stroke="#8a9096" stroke-width="0.9"/><rect x="2" y="2" width="9.5" height="9.5" fill="#2f6fa8" stroke="#9aa7b0" stroke-width="0.9"/><path d="M5.5 5l-1.5 1.3 1.5 1.3M7.5 6.5l1.5 1.3-1.5 1.3" stroke="#e0e8f0" stroke-width="0.8" fill="none"/></svg>
<div class="t" style="left:113.8px;top:617.19px;font-size:11.9px;color:#bbbbbb;font-weight:normal;font-family:'Liberation Sans';font-style:normal;transform:scaleX(0.9424);">__call__, worker.py:71</div>
<svg class="a" style="left:98.5px;top:628.35px;" width="12" height="12" viewBox="0 0 12 12"><rect x="0.5" y="0.5" width="9" height="9" fill="#3c3f41" stroke="#8a9096" stroke-width="0.9"/><rect x="2" y="2" width="9.5" height="9.5" fill="#2f6fa8" stroke="#9aa7b0" stroke-width="0.9"/><path d="M5.5 5l-1.5 1.3 1.5 1.3M7.5 6.5l1.5 1.3-1.5 1.3" stroke="#e0e8f0" stroke-width="0.8" fill="none"/></svg>
<div class="t" style="left:113.8px;top:634.22px;font-size:11.9px;color:#bbbbbb;font-weight:normal;font-family:'Liberation Sans';font-style:normal;transform:scaleX(1.0079);">trace_task, trace.py:240</div>
<svg class="a" style="left:98.5px;top:645.3800000000001px;" width="12" height="12" viewBox="0 0 12 12"><rect x="0.5" y="0.5" width="9" height="9" fill="#3c3f41" stroke="#8a9096" stroke-width="0.9"/><rect x="2" y="2" width="9.5" height="9.5" fill="#2f6fa8" stroke="#9aa7b0" stroke-width="0.9"/><path d="M5.5 5l-1.5 1.3 1.5 1.3M7.5 6.5l1.5 1.3-1.5 1.3" stroke="#e0e8f0" stroke-width="0.8" fill="none"/></svg>
<div class="t" style="left:113.8px;top:651.25px;font-size:11.9px;color:#bbbbbb;font-weight:normal;font-family:'Liberation Sans';font-style:normal;transform:scaleX(0.9957);">_fast_trace_task, trace.py:349</div>
<svg class="a" style="left:98.5px;top:662.4100000000001px;" width="12" height="12" viewBox="0 0 12 12"><rect x="0.5" y="0.5" width="9" height="9" fill="#3c3f41" stroke="#8a9096" stroke-width="0.9"/><rect x="2" y="2" width="9.5" height="9.5" fill="#2f6fa8" stroke="#9aa7b0" stroke-width="0.9"/><path d="M5.5 5l-1.5 1.3 1.5 1.3M7.5 6.5l1.5 1.3-1.5 1.3" stroke="#e0e8f0" stroke-width="0.8" fill="none"/></svg>
<div class="t" style="left:113.8px;top:668.28px;font-size:11.9px;color:#bbbbbb;font-weight:normal;font-family:'Liberation Sans';font-style:normal;transform:scaleX(1.0279);">workloop, pool.py:367</div>
<svg class="a" style="left:98.5px;top:679.44px;" width="12" height="12" viewBox="0 0 12 12"><rect x="0.5" y="0.5" width="9" height="9" fill="#3c3f41" stroke="#8a9096" stroke-width="0.9"/><rect x="2" y="2" width="9.5" height="9.5" fill="#2f6fa8" stroke="#9aa7b0" stroke-width="0.9"/><path d="M5.5 5l-1.5 1.3 1.5 1.3M7.5 6.5l1.5 1.3-1.5 1.3" stroke="#e0e8f0" stroke-width="0.8" fill="none"/></svg>
<div class="t" style="left:113.8px;top:685.31px;font-size:11.9px;color:#bbbbbb;font-weight:normal;font-family:'Liberation Sans';font-style:normal;transform:scaleX(1.0436);">run, pool.py:295</div>
<svg class="a" style="left:98.5px;top:696.47px;" width="12" height="12" viewBox="0 0 12 12"><rect x="0.5" y="0.5" width="9" height="9" fill="#3c3f41" stroke="#8a9096" stroke-width="0.9"/><rect x="2" y="2" width="9.5" height="9.5" fill="#2f6fa8" stroke="#9aa7b0" stroke-width="0.9"/><path d="M5.5 5l-1.5 1.3 1.5 1.3M7.5 6.5l1.5 1.3-1.5 1.3" stroke="#e0e8f0" stroke-width="0.8" fill="none"/></svg>
<div class="t" style="left:113.8px;top:702.34px;font-size:11.9px;color:#bbbbbb;font-weight:normal;font-family:'Liberation Sans';font-style:normal;transform:scaleX(1.0200);">_bootstrap, process.py:292</div>
<svg class="a" style="left:98.5px;top:713.5px;" width="12" height="12" viewBox="0 0 12 12"><rect x="0.5" y="0.5" width="9" height="9" fill="#3c3f41" stroke="#8a9096" stroke-width="0.9"/><rect x="2" y="2" width="9.5" height="9.5" fill="#2f6fa8" stroke="#9aa7b0" stroke-width="0.9"/><path d="M5.5 5l-1.5 1.3 1.5 1.3M7.5 6.5l1.5 1.3-1.5 1.3" stroke="#e0e8f0" stroke-width="0.8" fill="none"/></svg>
<div class="t" style="left:113.8px;top:719.37px;font-size:11.9px;color:#bbbbbb;font-weight:normal;font-family:'Liberation Sans';font-style:normal;transform:scaleX(0.9760);">__init__, forking.py:105</div>
<svg class="a" style="left:98.5px;top:730.5300000000001px;" width="12" height="12" viewBox="0 0 12 12"><rect x="0.5" y="0.5" width="9" height="9" fill="#3c3f41" stroke="#8a9096" stroke-width="0.9"/><rect x="2" y="2" width="9.5" height="9.5" fill="#2f6fa8" stroke="#9aa7b0" stroke-width="0.9"/><path d="M5.5 5l-1.5 1.3 1.5 1.3M7.5 6.5l1.5 1.3-1.5 1.3" stroke="#e0e8f0" stroke-width="0.8" fill="none"/></svg>
<div class="t" style="left:113.8px;top:736.40px;font-size:11.9px;color:#bbbbbb;font-weight:normal;font-family:'Liberation Sans';font-style:normal;transform:scaleX(1.0138);">start, process.py:137</div>
<svg class="a" style="left:98.5px;top:747.5600000000001px;" width="12" height="12" viewBox="0 0 12 12"><rect x="0.5" y="0.5" width="9" height="9" fill="#3c3f41" stroke="#8a9096" stroke-width="0.9"/><rect x="2" y="2" width="9.5" height="9.5" fill="#2f6fa8" stroke="#9aa7b0" stroke-width="0.9"/><path d="M5.5 5l-1.5 1.3 1.5 1.3M7.5 6.5l1.5 1.3-1.5 1.3" stroke="#e0e8f0" stroke-width="0.8" fill="none"/></svg>
<div class="t" style="left:113.8px;top:753.43px;font-size:11.9px;color:#bbbbbb;font-weight:normal;font-family:'Liberation Sans';font-style:normal;transform:scaleX(0.9848);">_create_worker_process, pool.py:1068</div>
<svg class="a" style="left:98.5px;top:764.59px;" width="12" height="12" viewBox="0 0 12 12"><rect x="0.5" y="0.5" width="9" height="9" fill="#3c3f41" stroke="#8a9096" stroke-width="0.9"/><rect x="2" y="2" width="9.5" height="9.5" fill="#2f6fa8" stroke="#9aa7b0" stroke-width="0.9"/><path d="M5.5 5l-1.5 1.3 1.5 1.3M7.5 6.5l1.5 1.3-1.5 1.3" stroke="#e0e8f0" stroke-width="0.8" fill="none"/></svg>
<div class="t" style="left:113.8px;top:770.46px;font-size:11.9px;color:#bbbbbb;font-weight:normal;font-family:'Liberation Sans';font-style:normal;transform:scaleX(0.9816);">_create_worker_process, asynpool.py:415</div>
<svg class="a" style="left:98.5px;top:781.6200000000001px;" width="12" height="12" viewBox="0 0 12 12"><rect x="0.5" y="0.5" width="9" height="9" fill="#3c3f41" stroke="#8a9096" stroke-width="0.9"/><rect x="2" y="2" width="9.5" height="9.5" fill="#2f6fa8" stroke="#9aa7b0" stroke-width="0.9"/><path d="M5.5 5l-1.5 1.3 1.5 1.3M7.5 6.5l1.5 1.3-1.5 1.3" stroke="#e0e8f0" stroke-width="0.8" fill="none"/></svg>
<div class="t" style="left:113.8px;top:787.49px;font-size:11.9px;color:#bbbbbb;font-weight:normal;font-family:'Liberation Sans';font-style:normal;transform:scaleX(0.9897);">_repopulate_pool, pool.py:1237</div>
<svg class="a" style="left:98.5px;top:798.6500000000001px;" width="12" height="12" viewBox="0 0 12 12"><rect x="0.5" y="0.5" width="9" height="9" fill="#3c3f41" stroke="#8a9096" stroke-width="0.9"/><rect x="2" y="2" width="9.5" height="9.5" fill="#2f6fa8" stroke="#9aa7b0" stroke-width="0.9"/><path d="M5.5 5l-1.5 1.3 1.5 1.3M7.5 6.5l1.5 1.3-1.5 1.3" stroke="#e0e8f0" stroke-width="0.8" fill="none"/></svg>
<div class="t" style="left:113.8px;top:804.52px;font-size:11.9px;color:#bbbbbb;font-weight:normal;font-family:'Liberation Sans';font-style:normal;transform:scaleX(0.9848);">_maintain_pool, pool.py:1252</div>
<div class="a" style="left:401.4px;top:542px;width:7.4px;height:101.3px;border-radius:3.7px;background:#515456"></div>
</div></div>
<div class="a" style="left:433px;top:513.8px;width:1px;height:292px;background:#2f3133;"></div>
<svg class="a" style="left:414.0px;top:515.5px;" width="17" height="16" viewBox="0 0 17 16"><path d="M6 1v9M1.5 5.5h9" stroke="#3fbf45" stroke-width="2"/><circle cx="5" cy="12" r="2.5" fill="#4a9a48" fill-opacity="0.8"/><circle cx="9" cy="12" r="2.5" fill="#4a9a48" fill-opacity="0.8"/><path d="M11 11l3-3.5 2 1" stroke="#9aa7b0" stroke-width="0.9" fill="none"/></svg>
<div class="a" style="left:417px;top:545.2px;width:10.5px;height:1.3px;background:#5b5e60;"></div>
<svg class="a" style="left:416.2px;top:561.8px;" width="12" height="10" viewBox="0 0 12 10"><path d="M1 8h10L6 3z" fill="#5b5e60"/></svg>
<svg class="a" style="left:416.2px;top:583.0px;" width="12" height="10" viewBox="0 0 12 10"><path d="M1 2h10L6 7z" fill="#5b5e60"/></svg>
<svg class="a" style="left:415.2px;top:601.8px;" width="14" height="16" viewBox="0 0 14 16"><path d="M4 1h6l2 2v8H4z" fill="none" stroke="#5b5e60" stroke-width="1.1"/><path d="M1 4h6l2 2v8H1z" fill="#3c3f41" stroke="#5b5e60" stroke-width="1.1"/></svg>
<div class="a" style="left:412.4px;top:621.2px;width:19.8px;height:19px;border:1px solid #5e6163;border-radius:2px;background:#4c5052"></div>
<svg class="a" style="left:415.3px;top:623.8px;" width="14" height="14" viewBox="0 0 14 14"><rect x="1" y="1" width="12" height="11" fill="none" stroke="#9aa7b0" stroke-width="0.9"/><rect x="1" y="1" width="12" height="1.6" fill="#4a9ad8"/><circle cx="4.5" cy="10" r="2.4" fill="#4a9a48"/><circle cx="7.5" cy="10.5" r="2.4" fill="#4a9a48"/><path d="M4 6l2.5-2 3 3" stroke="#9aa7b0" stroke-width="0.8" fill="none"/></svg>
<svg class="a" style="left:435.0px;top:516.0px;" width="11" height="12" viewBox="0 0 11 12"><path d="M1.5 1l8 5-8 5z" fill="#a8a8a8"/></svg>
<svg class="a" style="left:454.5px;top:516.0px;" width="11" height="11" viewBox="0 0 11 11"><rect x="0" y="0.5" width="11" height="2.6" fill="#d9a24a"/><rect x="0" y="4.2" width="11" height="2.6" fill="#d9a24a"/><rect x="0" y="7.9" width="11" height="2.6" fill="#d9a24a"/></svg>
<div class="t" style="left:469.6px;top:522.07px;font-size:11.9px;color:#bbbbbb;font-weight:normal;font-family:'Liberation Sans';font-style:normal;transform:scaleX(1.0160);"><span style="color:#5b9df0">connection</span><span style="color:#a0a0a0"> = </span><span style="color:#808080">{connection}</span> &lt;connection object at 0x10ccbdad0; dsn: 'sslmode=prefer ho</div>
<div class="t" style="left:937.5px;top:522.07px;font-size:11.9px;color:#7d93b8;font-weight:normal;font-family:'Liberation Sans';font-style:normal;transform:scaleX(0.9585);">...</div>
<div class="t" style="left:950px;top:522.07px;font-size:11.9px;color:#6a90c8;font-weight:normal;font-family:'Liberation Sans';font-style:normal;transform:scaleX(0.9195);">View</div>
<svg class="a" style="left:454px;top:531.6px;" width="12" height="12" viewBox="0 0 12 12"><rect x="0.5" y="0.5" width="11" height="11" fill="#2f6fa8" stroke="#9aa7b0" stroke-width="1"/><text x="2.2" y="5.6" font-size="4.6" fill="#fff" font-family="Liberation Sans">10</text><text x="2.2" y="10.4" font-size="4.6" fill="#fff" font-family="Liberation Sans">01</text></svg>
<div class="t" style="left:469.6px;top:538.47px;font-size:11.9px;color:#bbbbbb;font-weight:normal;font-family:'Liberation Sans';font-style:normal;transform:scaleX(0.9957);"><span style="color:#5b9df0">query</span><span style="color:#a0a0a0"> = </span><span style="color:#808080">{unicode}</span> u'/* Username: admin@example.com, Task ID: 0e6a91cd-95e6-43ba-b</div>
<div class="t" style="left:937.5px;top:538.47px;font-size:11.9px;color:#7d93b8;font-weight:normal;font-family:'Liberation Sans';font-style:normal;transform:scaleX(0.9585);">...</div>
<div class="t" style="left:950px;top:538.47px;font-size:11.9px;color:#6a90c8;font-weight:normal;font-family:'Liberation Sans';font-style:normal;transform:scaleX(0.9195);">View</div>
<svg class="a" style="left:435.0px;top:548.4px;" width="11" height="12" viewBox="0 0 11 12"><path d="M1.5 1l8 5-8 5z" fill="#a8a8a8"/></svg>
<svg class="a" style="left:454.5px;top:548.4px;" width="11" height="11" viewBox="0 0 11 11"><rect x="0" y="0.5" width="11" height="2.6" fill="#d9a24a"/><rect x="0" y="4.2" width="11" height="2.6" fill="#d9a24a"/><rect x="0" y="7.9" width="11" height="2.6" fill="#d9a24a"/></svg>
<div class="t" style="left:469.6px;top:554.47px;font-size:11.9px;color:#bbbbbb;font-weight:normal;font-family:'Liberation Sans';font-style:normal;transform:scaleX(0.9964);"><span style="color:#5b9df0">self</span><span style="color:#a0a0a0"> = </span><span style="color:#808080">{PostgreSQL}</span> &lt;redash.query_runner.pg.PostgreSQL object at 0x10bf76cd0&gt;</div>
<svg class="a" style="left:435.0px;top:564.8px;" width="11" height="12" viewBox="0 0 11 12"><path d="M1.5 1l8 5-8 5z" fill="#a8a8a8"/></svg>
<svg class="a" style="left:454.5px;top:564.8px;" width="11" height="11" viewBox="0 0 11 11"><rect x="0" y="0.5" width="11" height="2.6" fill="#d9a24a"/><rect x="0" y="4.2" width="11" height="2.6" fill="#d9a24a"/><rect x="0" y="7.9" width="11" height="2.6" fill="#d9a24a"/></svg>
<div class="t" style="left:469.6px;top:570.87px;font-size:11.9px;color:#bbbbbb;font-weight:normal;font-family:'Liberation Sans';font-style:normal;transform:scaleX(0.9967);"><span style="color:#5b9df0">user</span><span style="color:#a0a0a0"> = </span><span style="color:#808080">{User}</span> &lt;redash.models.User object at 0x10d032d10&gt;</div>
<div class="a" style="left:437.5px;top:795px;width:245px;height:7px;border-radius:3.5px;background:#45484a"></div>
<div class="a" style="left:662.8px;top:742.2px;width:308px;height:55.8px;background:#4b4e50;border:1px solid #55585a;box-shadow:0 2px 6px rgba(0,0,0,0.35)"></div>
<div class="a" style="left:671.6px;top:749px;width:12px;height:12px;border-radius:50%;background:#3d8fd6"></div>
<div class="t" style="left:675.9px;top:755.31px;font-size:9.5px;color:#ffffff;font-weight:bold;font-family:'Liberation Sans';font-style:normal;">i</div>
<div class="t" style="left:690.6px;top:755.11px;font-size:11.8px;color:#d8d8d8;font-weight:bold;font-family:'Liberation Sans';font-style:normal;transform:scaleX(1.0174);">Python Versions Compatibility</div>
<div class="t" style="left:690.6px;top:772.01px;font-size:11.8px;color:#c4c4c4;font-weight:normal;font-family:'Liberation Sans';font-style:normal;transform:scaleX(1.0303);">Your source code contains __future__ imports.</div>
<div class="t" style="left:690.6px;top:784.71px;font-size:11.8px;color:#c4c4c4;font-weight:normal;font-family:'Liberation Sans';font-style:normal;transform:scaleX(1.0420);">Would you like to enable Code compatibility...</div>
<svg class="a" style="left:951.8px;top:781.4px;" width="12" height="10" viewBox="0 0 12 10"><path d="M1.5 3l4.5 4.5L10.5 3" stroke="#b8b8b8" stroke-width="1.2" fill="none"/></svg>
<svg class="a" style="left:69.9px;top:469.0px;" width="16" height="16" viewBox="0 0 16 16"><path d="M7 2.5A5.5 5.5 0 1 0 11 11" stroke="#3fbf45" stroke-width="2" fill="none"/><path d="M6 0l4 2.8L6 5.5z" fill="#3fbf45"/><rect x="7.5" y="7.5" width="7" height="7" fill="#b0b0b0"/></svg>
<div class="a" style="left:67px;top:490.5px;width:22px;height:1px;background:repeating-linear-gradient(90deg,#5a5d5f 0 1px,transparent 1px 3px)"></div>
<svg class="a" style="left:69.9px;top:495.2px;" width="16" height="16" viewBox="0 0 16 16"><path d="M5 1.5l10 6.5-10 6.5z" fill="#3fbf45"/><path d="M1 3h3M1 5.5h3M1 8h3M1 10.5h3M1 13h3" stroke="#6a6d70" stroke-width="1.2"/></svg>
<svg class="a" style="left:69.9px;top:516.7px;" width="16" height="16" viewBox="0 0 16 16"><rect x="3" y="2" width="3.5" height="12" fill="#5b5e60"/><rect x="9.5" y="2" width="3.5" height="12" fill="#5b5e60"/></svg>
<svg class="a" style="left:69.9px;top:538.0px;" width="16" height="16" viewBox="0 0 16 16"><rect x="1.5" y="1.5" width="13" height="13" fill="#e05a4e"/></svg>
<div class="a" style="left:67px;top:560px;width:22px;height:1px;background:repeating-linear-gradient(90deg,#5a5d5f 0 1px,transparent 1px 3px)"></div>
<svg class="a" style="left:69.9px;top:564.9px;" width="16" height="16" viewBox="0 0 16 16"><circle cx="6" cy="5" r="4" fill="#e05a4e"/><circle cx="6" cy="11" r="4" fill="#e05a4e"/><circle cx="13" cy="5" r="1.5" fill="#9aa7b0"/><circle cx="13" cy="10" r="1.5" fill="#9aa7b0"/></svg>
<svg class="a" style="left:69.9px;top:586.0px;" width="16" height="16" viewBox="0 0 16 16"><circle cx="8" cy="8" r="6.5" fill="none" stroke="#9aa7b0" stroke-width="1.2"/><circle cx="8" cy="8" r="5" fill="#e05a4e"/><path d="M4.5 11.5l7-7" stroke="#9aa7b0" stroke-width="1.6"/></svg>
<div class="a" style="left:67px;top:607.5px;width:22px;height:1px;background:repeating-linear-gradient(90deg,#5a5d5f 0 1px,transparent 1px 3px)"></div>
<svg class="a" style="left:69.9px;top:612.8px;" width="16" height="16" viewBox="0 0 16 16"><rect x="1" y="1" width="9" height="7" fill="#4a9ad8" stroke="#9aa7b0" stroke-width="0.8"/><rect x="11" y="1" width="4" height="7" fill="none" stroke="#9aa7b0" stroke-width="0.8"/><rect x="1" y="9.5" width="14" height="5" fill="none" stroke="#9aa7b0" stroke-width="0.8"/></svg>
<svg class="a" style="left:69.9px;top:634.1px;" width="16" height="16" viewBox="0 0 16 16"><circle cx="7" cy="7" r="3.8" fill="none" stroke="#3d96d6" stroke-width="2.6" stroke-dasharray="1.9 1.1"/><circle cx="7" cy="7" r="3" fill="none" stroke="#3d96d6" stroke-width="1.6"/><path d="M11 13h4l-2 2z" fill="#e0e0e0"/></svg>
<div class="a" style="left:67px;top:655.5px;width:22px;height:1px;background:repeating-linear-gradient(90deg,#5a5d5f 0 1px,transparent 1px 3px)"></div>
<svg class="a" style="left:69.9px;top:661.0px;" width="16" height="16" viewBox="0 0 16 16"><path d="M8 2l6 6-2 1-3 1-3-3 1-3z" fill="#a66fc8"/><path d="M6 10l-4.5 4.5" stroke="#9aa7b0" stroke-width="1.3"/></svg>
<svg class="a" style="left:69.9px;top:682.5px;" width="16" height="16" viewBox="0 0 16 16"><path d="M2.5 2.5l11 11M13.5 2.5l-11 11" stroke="#e05a4e" stroke-width="2.2"/></svg>
<div class="t" style="left:72.5px;top:711.95px;font-size:16px;color:#3d96d6;font-weight:bold;font-family:'Liberation Sans';font-style:normal;">?</div>
<div class="a" style="left:48px;top:806.1px;width:928px;height:1px;background:#4a4c4e;"></div>
<div class="a" style="left:123.4px;top:807px;width:72.4px;height:18.5px;background:#2d2f31;"></div>
<svg class="a" style="left:72.5px;top:808.0px;" width="15" height="16" viewBox="0 0 15 16"><path d="M2 1.5l10 6.5-10 6.5z" fill="#3daa4a"/><circle cx="12" cy="13" r="2" fill="#2ec834"/></svg>
<div class="t" style="left:88.6px;top:815.61px;font-size:11.5px;color:#bbbbbb;font-weight:normal;font-family:'Liberation Sans';font-style:normal;transform:scaleX(0.8234);"><u>4</u>: Run</div>
<svg class="a" style="left:131.0px;top:808.0px;" width="15" height="16" viewBox="0 0 15 16"><ellipse cx="6.5" cy="8.5" rx="4.5" ry="5" fill="#5aa342"/><path d="M1 5l2.5 2M0.5 9h2.5M1 13l2.5-2M12 5l-2 2" stroke="#9aa7b0" stroke-width="1"/><circle cx="11.5" cy="13" r="2.3" fill="#2ec834"/></svg>
<div class="t" style="left:147.5px;top:815.61px;font-size:11.5px;color:#e0e0e0;font-weight:normal;font-family:'Liberation Sans';font-style:normal;transform:scaleX(0.8677);"><u>5</u>: Debug</div>
<svg class="a" style="left:203.7px;top:808.0px;" width="15" height="16" viewBox="0 0 15 16"><circle cx="5" cy="5" r="3.5" fill="#e0e0e0" stroke="#9a9a9a"/><circle cx="9" cy="9" r="3.5" fill="#e6b060"/><rect x="5" y="11" width="8" height="4" fill="#3d8fd6"/></svg>
<div class="t" style="left:220.7px;top:815.61px;font-size:11.5px;color:#bbbbbb;font-weight:normal;font-family:'Liberation Sans';font-style:normal;transform:scaleX(0.8319);"><u>6</u>: TODO</div>
<svg class="a" style="left:275.5px;top:808.0px;" width="15" height="16" viewBox="0 0 15 16"><circle cx="3.5" cy="3.5" r="2.3" fill="#4a9ad8"/><circle cx="11.5" cy="3.5" r="2.3" fill="#4a9ad8"/><circle cx="7.5" cy="12.5" r="2.3" fill="#9aa7b0"/><path d="M3.5 5.5L7.5 10.5M11.5 5.5L7.5 10.5" stroke="#9aa7b0" stroke-width="1.2"/></svg>
<div class="t" style="left:291.8px;top:815.61px;font-size:11.5px;color:#bbbbbb;font-weight:normal;font-family:'Liberation Sans';font-style:normal;transform:scaleX(0.8555);"><u>9</u>: Version Control</div>
<svg class="a" style="left:390.5px;top:810px;" width="12" height="12" viewBox="0 0 12 12"><g transform="scale(1.0)"><path d="M6 0.5c-2.6 0-2.5 1.2-2.5 1.2V3h2.6v0.6H2.2S0.5 3.4 0.5 6c0 2.6 1.5 2.5 1.5 2.5h0.9V7.3s0-1.5 1.5-1.5h2.5s1.4 0 1.4-1.4V1.9S8.5 0.5 6 0.5z" fill="#3d8ccf"/><path d="M6 11.5c2.6 0 2.5-1.2 2.5-1.2V9H5.9V8.4h3.9s1.7 0.2 1.7-2.4c0-2.6-1.5-2.5-1.5-2.5H9.1v1.2s0 1.5-1.5 1.5H5.1s-1.4 0-1.4 1.4v2.5S3.5 11.5 6 11.5z" fill="#e6c132"/></g></svg>
<div class="t" style="left:405.8px;top:815.61px;font-size:11.5px;color:#bbbbbb;font-weight:normal;font-family:'Liberation Sans';font-style:normal;transform:scaleX(0.8400);">Python Console</div>
<svg class="a" style="left:492.5px;top:809.5px;" width="12" height="13" viewBox="0 0 12 13"><rect x="0.5" y="1.5" width="10.5" height="10" fill="#1e1e1e" stroke="#b0b0b0" stroke-width="0.9"/><path d="M2.5 5l2 1.5-2 1.5M5.5 9h3" stroke="#e0e0e0" stroke-width="0.9" fill="none"/></svg>
<div class="t" style="left:507.7px;top:815.61px;font-size:11.5px;color:#bbbbbb;font-weight:normal;font-family:'Liberation Sans';font-style:normal;transform:scaleX(0.8813);">Terminal</div>
<div class="a" style="left:889px;top:810px;width:12.5px;height:12.5px;border-radius:50%;background:#d9534f"></div>
<div class="t" style="left:892.3px;top:816.68px;font-size:9px;color:#ffffff;font-weight:bold;font-family:'Liberation Sans';font-style:normal;">2</div>
<div class="t" style="left:905.9px;top:815.61px;font-size:11.5px;color:#bbbbbb;font-weight:normal;font-family:'Liberation Sans';font-style:normal;transform:scaleX(0.8419);">Event Log</div>
<div class="a" style="left:48px;top:825.1px;width:928px;height:1px;background:#45484a;"></div>
<svg class="a" style="left:51.8px;top:828.6px;" width="14" height="13" viewBox="0 0 14 13"><rect x="0.6" y="0.6" width="11.6" height="9.6" fill="#5e5f60" stroke="#9a9a9a" stroke-width="1.1"/><path d="M0.5 12h12" stroke="#9a9a9a" stroke-width="1.1"/></svg>
<div class="t" style="left:74.7px;top:834.71px;font-size:11.5px;color:#bbbbbb;font-weight:normal;font-family:'Liberation Sans';font-style:normal;transform:scaleX(0.8757);">EditorConfig: "true;" is not a valid value for trim_trailing_whitespace for file /Users/ariarijp/workspace/python/redash/node_modules/array-i... (today 16:24)</div>
<div class="t" style="left:768.7px;top:834.71px;font-size:11.5px;color:#bbbbbb;font-weight:normal;font-family:'Liberation Sans';font-style:normal;transform:scaleX(0.8096);">149:1</div>
<div class="t" style="left:800.4px;top:834.71px;font-size:11.5px;color:#bbbbbb;font-weight:normal;font-family:'Liberation Sans';font-style:normal;transform:scaleX(0.8271);">LF</div>
<svg class="a" style="left:811px;top:829.7px;" width="6" height="10" viewBox="0 0 6 10"><path d="M0.5 4L3 1 5.5 4zM0.5 6L3 9 5.5 6z" fill="#bbbbbb"/></svg>
<div class="t" style="left:825.2px;top:834.71px;font-size:11.5px;color:#bbbbbb;font-weight:normal;font-family:'Liberation Sans';font-style:normal;transform:scaleX(0.8993);">UTF-8</div>
<svg class="a" style="left:854px;top:829.7px;" width="6" height="10" viewBox="0 0 6 10"><path d="M0.5 4L3 1 5.5 4zM0.5 6L3 9 5.5 6z" fill="#bbbbbb"/></svg>
<div class="t" style="left:866.7px;top:834.71px;font-size:11.5px;color:#bbbbbb;font-weight:normal;font-family:'Liberation Sans';font-style:normal;transform:scaleX(0.8767);">Git: master</div>
<svg class="a" style="left:917px;top:829.7px;" width="6" height="10" viewBox="0 0 6 10"><path d="M0.5 4L3 1 5.5 4zM0.5 6L3 9 5.5 6z" fill="#bbbbbb"/></svg>
<svg class="a" style="left:935.5px;top:828.0px;" width="12" height="13" viewBox="0 0 12 13"><path d="M3 6V3.5a2.5 2.5 0 0 1 5 0" stroke="#a8a8a8" stroke-width="1.1" fill="none"/><rect x="4" y="6" width="7" height="6" fill="#a8a8a8"/><path d="M6.5 8l1 1.5 1-1.5z" fill="#3c3f41"/></svg>
<svg class="a" style="left:957.0px;top:827.5px;" width="14" height="14" viewBox="0 0 14 14"><rect x="3" y="1" width="8" height="6" rx="1.5" fill="none" stroke="#a8a8a8" stroke-width="1.1"/><path d="M1 7h12M3 7v4M11 7v4M2 12.5h3M9 12.5h3M5 10.5a2 2 0 0 1 4 0" stroke="#a8a8a8" stroke-width="1.1" fill="none"/><rect x="6" y="2.5" width="2" height="1.5" fill="#a8a8a8"/></svg>
</div></div>
</body></html>
